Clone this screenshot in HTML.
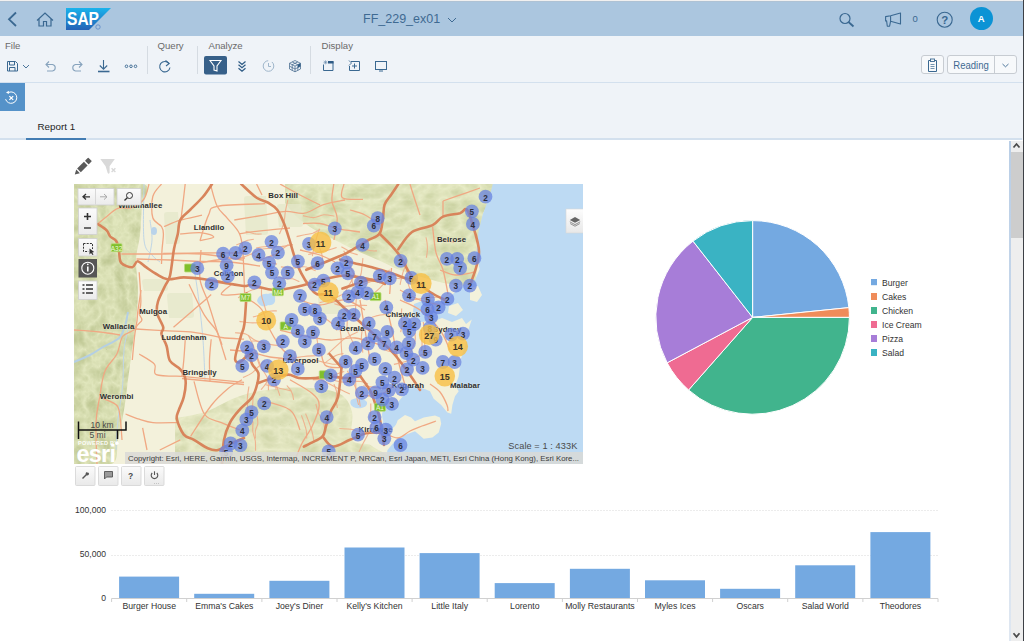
<!DOCTYPE html>
<html><head><meta charset="utf-8">
<style>
*{margin:0;padding:0;box-sizing:border-box}
html,body{width:1024px;height:641px;overflow:hidden;background:#fff;font-family:"Liberation Sans",sans-serif}
.a{position:absolute}
#top{left:0;top:0;width:1024px;height:1px;background:#f1f0f0}
#hdr{left:0;top:1px;width:1024px;height:35px;background:#abc6df}
#tb{left:0;top:36px;width:1024px;height:104px;background:#eff3f8}
#tbline{left:0;top:82px;width:1024px;height:1px;background:#d3e0ee}
#tabline{left:0;top:138px;width:1022px;height:1.5px;background:#d3e0ee}
#bluebox{left:0;top:83px;width:25px;height:28px;background:#5592c9}
.lbl{font-size:9.6px;color:#6a6a6a}
.sep{width:1px;background:#d5dbe2;top:46px;height:28px}
#rightedge{left:1022.6px;top:0;width:1.4px;height:641px;background:#3d4045}
#sb{left:1010px;top:141px;width:13px;height:500px;background:#eeeeee}
#sbl{left:1009px;top:141px;width:1.5px;height:500px;background:linear-gradient(#b9cee6,#dfe7f1)}
#thumb{left:1010.5px;top:152px;width:12.5px;height:86px;background:#cdcdcd}
svg{position:absolute;overflow:visible}
</style></head><body>
<div class="a" id="top"></div>
<div class="a" id="hdr"></div>
<div class="a" style="left:0;top:1px;width:1024px;height:1px;background:#afc2d4"></div>
<div class="a" id="tb"></div>
<div class="a" id="tbline"></div>
<div class="a" id="tabline"></div>
<div class="a" id="bluebox"></div>
<div class="a" id="sb"></div>
<div class="a" id="sbl"></div>
<div class="a" id="thumb"></div>
<div class="a" id="rightedge"></div>

<!-- header icons -->
<svg style="left:0;top:0" width="1024" height="36">
  <path d="M16 12.5 L9 19.3 L16 26" fill="none" stroke="#3a6891" stroke-width="1.8"/>
  <path d="M37 20.5 L45 13 L53 20.5 M39 19 V26 H43.5 V21.5 H46.5 V26 H51 V19" fill="none" stroke="#3a6891" stroke-width="1.2"/>
  <defs><linearGradient id="sapg" x1="0" y1="0" x2="0" y2="1"><stop offset="0" stop-color="#1ab3ec"/><stop offset="1" stop-color="#2361b6"/></linearGradient></defs>
  <path d="M66 8 H111 L89 30 H66 Z" fill="url(#sapg)"/>
  <text x="67" y="25.2" font-family="Liberation Sans" font-weight="bold" font-size="19" fill="#fff" textLength="32" lengthAdjust="spacingAndGlyphs">SAP</text>
  <circle cx="98" cy="27" r="2.2" fill="none" stroke="#5d86c6" stroke-width="0.8"/>
  <text x="363" y="23" font-family="Liberation Sans" font-size="12.5" fill="#3f6a92">FF_229_ex01</text>
  <path d="M448 18 L452 22 L456 18" fill="none" stroke="#3f6a92" stroke-width="1"/>
  <circle cx="845" cy="18.5" r="5" fill="none" stroke="#3a6891" stroke-width="1.2"/>
  <path d="M848.5 22 L853.5 26.5" stroke="#3a6891" stroke-width="1.8"/>
  <path d="M885.6 16.6 L890.6 15.8 L900.5 13 V24 L890.6 21.2 L889.6 26.2 H887.3 L886.6 20.9 H885.6 Z M890.6 15.8 V21.2" fill="none" stroke="#3a6891" stroke-width="1.1" stroke-linejoin="round"/>
  <text x="912.5" y="22" font-family="Liberation Sans" font-size="9.5" fill="#3a6891">0</text>
  <circle cx="944.7" cy="19.7" r="7.5" fill="none" stroke="#3a6891" stroke-width="1.1"/>
  <text x="944.7" y="24.2" text-anchor="middle" font-family="Liberation Sans" font-weight="bold" font-size="11.5" fill="#3a6891">?</text>
  <circle cx="981.5" cy="18.5" r="11.5" fill="#0b93d5"/>
  <text x="977.8" y="22.3" font-family="Liberation Sans" font-weight="bold" font-size="9.5" fill="#fff">A</text>
</svg>

<!-- toolbar -->
<div class="a lbl" style="left:5px;top:39.5px">File</div>
<div class="a lbl" style="left:157.5px;top:39.5px">Query</div>
<div class="a lbl" style="left:208.5px;top:39.5px">Analyze</div>
<div class="a lbl" style="left:321.5px;top:39.5px">Display</div>
<div class="a sep" style="left:147px"></div>
<div class="a sep" style="left:197px"></div>
<div class="a sep" style="left:310px"></div>

<svg style="left:0;top:0" width="1024" height="140">
  <!-- save -->
  <path d="M7.5 61.5 H15.5 L17.5 63.5 V71 H7.5 Z M9.5 61.5 V65 H14.5 V61.5 M9.5 71 V67.5 H15 V71" fill="none" stroke="#3a6891" stroke-width="1"/>
  <path d="M23 65 L26 68 L29 65" fill="none" stroke="#3a6891" stroke-width="0.9"/>
  <!-- undo -->
  <path d="M49 61.5 L46 64.5 L49 67.5 M46 64.5 H52.5 A3.3 3.3 0 0 1 52.5 71 H47" fill="none" stroke="#87a3bd" stroke-width="1.1"/>
  <!-- redo -->
  <path d="M79 61.5 L82 64.5 L79 67.5 M82 64.5 H75.5 A3.3 3.3 0 0 0 75.5 71 H81" fill="none" stroke="#87a3bd" stroke-width="1.1"/>
  <!-- download -->
  <path d="M103.5 60 V69 M99.8 65.5 L103.5 69.2 L107.2 65.5" fill="none" stroke="#3a6891" stroke-width="1.1"/>
  <path d="M98 71.5 H109.5" stroke="#3a6891" stroke-width="1.6"/>
  <!-- more -->
  <circle cx="126.5" cy="66.3" r="1.3" fill="none" stroke="#3a6891" stroke-width="0.9"/>
  <circle cx="131" cy="66.3" r="1.3" fill="none" stroke="#3a6891" stroke-width="0.9"/>
  <circle cx="135.5" cy="66.3" r="1.3" fill="none" stroke="#3a6891" stroke-width="0.9"/>
  <!-- refresh -->
  <path d="M169 63.5 A5.2 5.2 0 1 0 170 67.5" fill="none" stroke="#3a6891" stroke-width="1.1"/>
  <path d="M165.5 60.5 L169.2 63.5 L166 66" fill="none" stroke="#3a6891" stroke-width="1.1"/>
  <!-- filter active -->
  <rect x="204" y="56" width="23" height="18.5" rx="2" fill="#376089"/>
  <path d="M210 60.5 H221 L217 66 V71 L214 70 V66 Z" fill="none" stroke="#fff" stroke-width="1.1"/>
  <!-- double chevrons -->
  <path d="M238.5 61.5 L242 64.5 L245.5 61.5 M238.5 64.8 L242 67.8 L245.5 64.8 M238.5 68.2 L242 71.2 L245.5 68.2" fill="none" stroke="#2e5b85" stroke-width="1.2"/>
  <!-- history -->
  <circle cx="268.5" cy="66" r="5.3" fill="none" stroke="#9fb6cb" stroke-width="1" stroke-dasharray="24 4"/>
  <path d="M268.5 63 V66.5 H271" fill="none" stroke="#9fb6cb" stroke-width="1"/>
  <!-- cube -->
  <path d="M295 60.5 L300.5 63.3 V69 L295 71.8 L289.5 69 V63.3 Z M289.5 63.3 L295 66.1 L300.5 63.3 M295 66.1 V71.8 M292.2 61.9 L297.8 64.7 M297.8 61.9 L292.2 64.7 M289.5 66.2 L295 69 L300.5 66.2 M292.2 64.7 V70.4 M297.8 64.7 V70.4" fill="none" stroke="#45698d" stroke-width="0.75"/>
  <path d="M298 64.5 L300.5 63.3 V66.2 L298 67.5 Z" fill="#2e5b85"/>
  <!-- display icons -->
  <path d="M323.5 64.5 V70.5 H333 V61.5 H328" fill="none" stroke="#3a6891" stroke-width="1"/>
  <rect x="328" y="61" width="5.5" height="2.5" fill="#2e5b85"/>
  <path d="M325.5 60.3 V64.3 M323.5 62.3 H327.5 M324 60.8 L327 63.8 M327 60.8 L324 63.8" stroke="#6a8cad" stroke-width="0.6"/>
  <path d="M349 60.5 L351.5 63 L349 65.5" fill="none" stroke="#3a6891" stroke-width="0.9"/>
  <path d="M351 61.5 H359.5 V70.5 H349.5 V66 M354.5 63.5 V68.5 M352 66 H357" fill="none" stroke="#3a6891" stroke-width="1"/>
  <rect x="375.5" y="61.5" width="11" height="8" fill="none" stroke="#3a6891" stroke-width="1"/>
  <path d="M379 71 H383" stroke="#3a6891" stroke-width="1"/>
  <!-- right buttons -->
  <rect x="921.5" y="55.5" width="22" height="18" rx="2.5" fill="#f7f9fb" stroke="#c7ccd2" stroke-width="1"/>
  <path d="M930.5 60.5 H928.5 V71.5 H936.5 V60.5 H934.5" fill="none" stroke="#3a6891" stroke-width="1"/><rect x="930.5" y="59" width="4" height="2.5" fill="none" stroke="#3a6891" stroke-width="0.9"/><path d="M930.5 64.5 H934.5 M930.5 66.5 H934.5 M930.5 68.5 H934.5" stroke="#3a6891" stroke-width="0.7"/>
  <rect x="947.5" y="55.5" width="69" height="18" rx="2.5" fill="#f7f9fb" stroke="#c7ccd2" stroke-width="1"/>
  <path d="M994.5 56 V73" stroke="#c7ccd2" stroke-width="1"/>
  <text x="953.3" y="68.5" font-family="Liberation Sans" font-size="10.2" fill="#3f6a92" textLength="35.5" lengthAdjust="spacingAndGlyphs">Reading</text>
  <path d="M1002.5 64 L1005.5 66.8 L1008.5 64" fill="none" stroke="#3a6891" stroke-width="0.9"/>
  <!-- blue box icon -->
  <path d="M6 92.4 L8.9 90.7 V94.1 Z" fill="#fff"/>
  <path d="M8.8 92.4 A5.7 5.7 0 1 1 5.6 99.2" fill="none" stroke="#fff" stroke-width="1"/>
  <path d="M9.4 96.1 L13.2 99.9 M13.2 96.1 L9.4 99.9" stroke="#fff" stroke-width="1.3"/>
  <!-- tab -->
  <text x="37.5" y="130" font-family="Liberation Sans" font-size="9.8" fill="#1e1e1e">Report 1</text>
  <rect x="26" y="138" width="60" height="2" fill="#427cb3"/>
  <!-- scrollbar arrows -->
  <path d="M1013.5 147.5 L1016.5 144 L1019.5 147.5" fill="none" stroke="#4a4a4a" stroke-width="1.7"/>
  <path d="M1013.5 633.2 L1016.5 636.8 L1019.5 633.2" fill="none" stroke="#4a4a4a" stroke-width="1.7"/>
</svg>

<!-- MAP -->
<svg id="mapsvg" style="left:0;top:0" width="1024" height="641">
<!--MAPSTART-->
<defs><clipPath id="mclip"><rect x="74" y="184" width="509" height="280"/></clipPath><filter id="terr" x="74" y="184" width="509" height="280" filterUnits="userSpaceOnUse" color-interpolation-filters="sRGB"><feTurbulence type="turbulence" baseFrequency="0.07 0.06" numOctaves="3" seed="7"/><feColorMatrix type="matrix" values="-0.2 0 0 0 0.89  -0.18 0 0 0 0.91  -0.24 0 0 0 0.75  0 0 0 0 1"/></filter><filter id="terr2" x="74" y="184" width="509" height="280" filterUnits="userSpaceOnUse" color-interpolation-filters="sRGB"><feTurbulence type="turbulence" baseFrequency="0.05 0.07" numOctaves="3" seed="11"/><feColorMatrix type="matrix" values="-0.16 0 0 0 0.91  -0.14 0 0 0 0.925  -0.2 0 0 0 0.775  0 0 0 0 1"/></filter><clipPath id="lhclip"><path d="M74.0 184.0 C85.5 184.0 131.7 180.5 143.0 184.0 C154.3 187.5 142.5 196.5 142.0 205.0 C141.5 213.5 141.0 225.8 140.0 235.0 C139.0 244.2 136.3 250.8 136.0 260.0 C135.7 269.2 138.0 280.0 138.0 290.0 C138.0 300.0 137.0 310.0 136.0 320.0 C135.0 330.0 133.3 340.0 132.0 350.0 C130.7 360.0 129.3 370.0 128.0 380.0 C126.7 390.0 125.7 400.0 124.0 410.0 C122.3 420.0 120.0 431.0 118.0 440.0 C116.0 449.0 119.3 460.0 112.0 464.0 C104.7 468.0 80.3 464.0 74.0 464.0 Z"/></clipPath><clipPath id="thclip"><path d="M285.0 184.0 C319.5 184.0 459.0 179.0 492.0 184.0 C525.0 189.0 485.5 202.3 483.0 214.0 C480.5 225.7 478.5 242.7 477.0 254.0 C475.5 265.3 478.5 277.0 474.0 282.0 C469.5 287.0 458.2 284.7 450.0 284.0 C441.8 283.3 433.3 280.3 425.0 278.0 C416.7 275.7 407.8 273.0 400.0 270.0 C392.2 267.0 385.5 263.3 378.0 260.0 C370.5 256.7 362.2 253.3 355.0 250.0 C347.8 246.7 341.7 243.3 335.0 240.0 C328.3 236.7 321.2 233.7 315.0 230.0 C308.8 226.3 303.0 222.5 298.0 218.0 C293.0 213.5 287.2 205.5 285.0 203.0 Z"/></clipPath><clipPath id="bhclip"><path d="M175.0 418.0 C180.0 417.0 194.2 415.7 205.0 412.0 C215.8 408.3 228.3 399.8 240.0 396.0 C251.7 392.2 263.3 390.3 275.0 389.0 C286.7 387.7 299.2 387.2 310.0 388.0 C320.8 388.8 333.0 390.0 340.0 394.0 C347.0 398.0 350.0 404.3 352.0 412.0 C354.0 419.7 348.7 434.3 352.0 440.0 C355.3 445.7 368.2 442.0 372.0 446.0 C375.8 450.0 407.8 461.0 375.0 464.0 C342.2 467.0 208.3 464.0 175.0 464.0 Z"/></clipPath></defs>
<g clip-path="url(#mclip)">
<rect x="74" y="184" width="509" height="280" fill="#f3f1db"/>
<g clip-path="url(#lhclip)"><rect x="74" y="184" width="120" height="280" filter="url(#terr)"/></g>
<g clip-path="url(#thclip)" opacity="0.9"><rect x="280" y="184" width="220" height="110" filter="url(#terr2)"/></g>
<g clip-path="url(#bhclip)" opacity="0.8"><rect x="160" y="380" width="200" height="84" filter="url(#terr2)"/></g>
<path d="M164 215 Q164 212 167 212 H178 L180 241 Q180 244 177 244 H166 Z" fill="#e4e7c9" opacity="0.75"/>
<path d="M244 199 Q244 196 247 196 H266 L268 232 Q268 235 265 235 H246 Z" fill="#e4e7c9" opacity="0.75"/>
<path d="M277 207 Q277 204 280 204 H301 L303 224 Q303 227 300 227 H279 Z" fill="#e4e7c9" opacity="0.75"/>
<path d="M142 282 Q142 279 145 279 H166 L168 288 Q168 291 165 291 H144 Z" fill="#e4e7c9" opacity="0.75"/>
<path d="M167 296 Q167 293 170 293 H192 L194 315 Q194 318 191 318 H169 Z" fill="#e4e7c9" opacity="0.75"/>
<path d="M318 299 Q318 296 321 296 H340 L342 311 Q342 314 339 314 H320 Z" fill="#e4e7c9" opacity="0.75"/>
<path d="M492.8 184.0 L489.3 197.0 L482.7 214.6 L478.4 232.0 L476.2 254.0 L479.7 269.2 L474.0 282.4 L466.0 284.0 L458.0 289.0 L452.0 295.0 L446.0 299.0 L440.0 302.0 L432.0 300.0 L422.0 301.0 L414.0 304.0 L413.0 312.0 L420.0 322.0 L434.0 321.0 L442.0 318.0 L452.0 322.0 L462.0 318.0 L466.0 324.0 L471.8 319.5 L467.4 332.6 L465.2 345.7 L460.9 358.9 L458.7 376.3 L457.4 380.0 L455.0 385.0 L458.7 391.2 L455.0 396.2 L452.4 405.0 L451.2 413.7 L447.4 412.5 L441.2 405.0 L433.7 398.7 L430.0 391.2 L421.2 387.5 L410.0 385.0 L405.0 393.7 L398.7 401.2 L396.2 408.7 L390.0 412.5 L385.0 417.5 L382.5 423.7 L380.0 425.0 L396.2 421.2 L405.0 415.0 L411.2 417.5 L415.0 421.2 L423.7 417.5 L435.0 415.6 L440.0 417.5 L441.2 423.7 L438.7 432.4 L432.4 437.4 L423.7 438.7 L415.0 431.2 L405.0 435.0 L398.7 438.7 L393.7 442.4 L387.5 450.0 L385.0 464.0 L583.0 464.0 L583.0 184.0 Z" fill="#bddaf3"/>
<path d="M470 288 L478 286 L482 295 L477 302 L470 300 Z M449 306 L458 303 L463 310 L456 316 L448 313 Z M430 292 L440 289 L444 296 L436 299 Z" fill="#f3f1db"/>
<path d="M257 301 C258 296 263 293 268 294 C272 292 276 295 275 299 C276 303 272 306 268 305 C264 308 259 306 257 301 Z" fill="#bddaf3"/>
<path d="M351 400 C356 397 364 398 367 402 C368 407 362 409 356 408 C352 407 349 404 351 400 Z M384 406 C389 404 396 407 398 413 C399 420 396 427 391 429 C386 428 382 421 382 414 Z" fill="#bddaf3"/>
<path d="M74.0 362.0 C76.7 360.8 85.2 357.5 90.0 355.0 C94.8 352.5 98.2 349.8 103.0 347.0 C107.8 344.2 115.3 341.5 119.0 338.0 C122.7 334.5 123.5 330.3 125.0 326.0 C126.5 321.7 127.5 314.3 128.0 312.0" fill="none" stroke="#b4cfe3" stroke-width="2"/>
<path d="M150.0 220.0 C150.3 223.3 152.3 233.0 152.0 240.0 C151.7 247.0 148.7 258.3 148.0 262.0" fill="none" stroke="#c0d6e6" stroke-width="1"/>
<ellipse cx="154" cy="231" rx="3" ry="4" fill="#b9d3ea"/>
<path d="M128.7 326.5 C127.9 330.4 125.0 340.2 124.0 350.0 C123.0 359.8 123.7 373.3 122.7 385.0 C121.7 396.7 119.1 409.2 118.0 420.0 C116.9 430.8 116.3 445.0 116.0 450.0" fill="none" stroke="#c0d6e6" stroke-width="1"/>
<path d="M144.0 184.0 C144.0 193.3 142.7 228.2 144.0 240.0 C145.3 251.8 149.3 251.3 152.0 255.0 C154.7 258.7 158.7 260.8 160.0 262.0" fill="none" stroke="#c0d6e6" stroke-width="1"/>
<path d="M194.0 267.0 C194.8 272.8 197.5 289.3 199.0 301.5 C200.5 313.7 202.0 326.9 203.0 340.0 C204.0 353.1 204.7 373.3 205.0 380.0" fill="none" stroke="#c0d6e6" stroke-width="1"/>
<path d="M256.1 248.0 C258.2 247.7 264.3 246.5 268.4 246.3 C272.5 246.1 276.7 247.0 280.8 246.7 C284.9 246.4 291.0 244.9 293.0 244.6" fill="none" stroke="#f0ac88" stroke-width="1.1" opacity="0.9"/>
<path d="M239.5 321.4 C241.3 321.6 246.7 322.6 250.3 322.8 C253.9 323.0 257.5 322.7 261.1 322.6 C264.8 322.6 270.2 322.6 272.0 322.6" fill="none" stroke="#f0ac88" stroke-width="1.1" opacity="0.9"/>
<path d="M257.1 416.0 C257.2 417.3 258.1 421.1 257.8 423.6 C257.5 426.1 255.8 428.3 255.4 430.8 C255.0 433.3 255.4 437.2 255.4 438.4" fill="none" stroke="#f0ac88" stroke-width="1.1" opacity="0.9"/>
<path d="M362.5 284.9 C364.1 284.2 369.0 282.2 372.2 280.9 C375.4 279.5 378.9 278.6 381.9 276.8 C384.8 274.9 388.4 271.0 389.7 269.9" fill="none" stroke="#f0ac88" stroke-width="1.1" opacity="0.9"/>
<path d="M362.3 328.9 C362.2 330.2 361.5 334.1 361.4 336.8 C361.3 339.4 361.7 342.1 361.9 344.7 C362.2 347.4 362.7 351.3 362.8 352.6" fill="none" stroke="#f0ac88" stroke-width="1.1" opacity="0.9"/>
<path d="M267.8 360.4 C268.5 362.0 270.3 366.8 271.6 369.9 C272.8 373.1 274.6 376.2 275.3 379.5 C276.1 382.8 275.9 388.0 276.0 389.7" fill="none" stroke="#f0ac88" stroke-width="1.1" opacity="0.9"/>
<path d="M334.0 384.2 C334.4 385.5 336.3 389.3 336.6 391.9 C337.0 394.5 335.9 397.3 336.0 400.0 C336.1 402.7 337.2 406.7 337.4 408.0" fill="none" stroke="#f0ac88" stroke-width="1.1" opacity="0.9"/>
<path d="M408.7 299.8 C410.3 299.7 415.2 299.5 418.5 299.1 C421.7 298.7 424.9 297.7 428.1 297.4 C431.4 297.1 436.3 297.2 438.0 297.2" fill="none" stroke="#f0ac88" stroke-width="1.1" opacity="0.9"/>
<path d="M303.3 308.0 C304.9 309.0 309.5 312.3 312.9 313.9 C316.2 315.5 320.2 315.9 323.5 317.6 C326.8 319.3 331.2 323.0 332.7 324.1" fill="none" stroke="#f0ac88" stroke-width="1.1" opacity="0.9"/>
<path d="M423.3 322.0 C423.5 323.9 424.5 329.4 424.7 333.2 C424.9 336.9 424.4 340.7 424.7 344.5 C424.9 348.2 425.9 353.8 426.1 355.6" fill="none" stroke="#f0ac88" stroke-width="1.1" opacity="0.9"/>
<path d="M308.2 254.5 C309.8 254.1 314.6 253.1 317.7 252.4 C320.9 251.7 324.1 251.2 327.3 250.4 C330.4 249.5 335.1 248.0 336.6 247.5" fill="none" stroke="#f0ac88" stroke-width="1.1" opacity="0.9"/>
<path d="M361.2 249.5 C362.1 249.5 364.7 249.4 366.5 249.6 C368.2 249.8 369.9 250.6 371.6 250.8 C373.3 251.1 376.0 250.9 376.9 250.9" fill="none" stroke="#f0ac88" stroke-width="1.1" opacity="0.9"/>
<path d="M343.5 312.9 C343.2 313.9 342.5 317.0 341.8 319.0 C341.1 321.0 340.0 322.8 339.1 324.7 C338.2 326.6 336.9 329.5 336.4 330.4" fill="none" stroke="#f0ac88" stroke-width="1.1" opacity="0.9"/>
<path d="M312.8 379.6 C314.6 379.5 320.2 380.0 323.7 379.3 C327.3 378.5 330.5 376.4 333.9 375.1 C337.3 373.8 342.5 372.0 344.2 371.4" fill="none" stroke="#f0ac88" stroke-width="1.1" opacity="0.9"/>
<path d="M318.3 245.6 C318.7 246.5 320.2 249.2 320.9 251.1 C321.5 253.0 322.1 255.0 322.3 257.0 C322.5 259.0 322.1 262.1 322.0 263.1" fill="none" stroke="#f0ac88" stroke-width="1.1" opacity="0.9"/>
<path d="M406.6 264.2 C406.1 265.3 404.3 268.4 403.5 270.7 C402.6 272.9 402.3 275.4 401.7 277.7 C401.1 280.0 400.3 283.6 400.1 284.8" fill="none" stroke="#f0ac88" stroke-width="1.1" opacity="0.9"/>
<path d="M347.3 320.7 C347.3 322.3 346.7 326.9 347.3 329.8 C348.0 332.7 349.8 335.3 351.0 338.1 C352.2 340.9 354.0 345.0 354.6 346.4" fill="none" stroke="#f0ac88" stroke-width="1.1" opacity="0.9"/>
<path d="M429.2 295.0 C429.4 295.8 430.1 298.3 430.2 299.9 C430.2 301.6 429.7 303.2 429.6 304.9 C429.4 306.5 429.3 309.1 429.2 309.9" fill="none" stroke="#f0ac88" stroke-width="1.1" opacity="0.9"/>
<path d="M268.3 257.8 C269.5 257.2 273.3 255.6 275.6 254.2 C277.9 252.8 279.9 251.0 282.0 249.3 C284.2 247.7 287.4 245.3 288.5 244.5" fill="none" stroke="#f0ac88" stroke-width="1.1" opacity="0.9"/>
<path d="M237.9 259.0 C239.8 258.3 245.7 256.4 249.4 254.8 C253.2 253.2 256.6 250.5 260.5 249.4 C264.4 248.3 270.7 248.3 272.7 248.1" fill="none" stroke="#f0ac88" stroke-width="1.1" opacity="0.9"/>
<path d="M382.5 349.0 C384.1 349.5 388.5 351.6 391.6 351.8 C394.7 352.0 397.9 350.3 401.0 350.5 C404.1 350.7 408.6 352.6 410.1 353.0" fill="none" stroke="#f0ac88" stroke-width="1.1" opacity="0.9"/>
<path d="M253.0 421.3 C253.0 423.0 252.5 428.0 252.8 431.2 C253.2 434.5 254.8 437.6 255.3 440.8 C255.7 444.1 255.5 449.1 255.5 450.7" fill="none" stroke="#f0ac88" stroke-width="1.1" opacity="0.9"/>
<path d="M252.9 317.0 C254.2 316.6 258.3 315.6 260.9 314.7 C263.5 313.7 265.8 311.8 268.4 311.2 C271.1 310.6 275.4 311.0 276.8 310.9" fill="none" stroke="#f0ac88" stroke-width="1.1" opacity="0.9"/>
<path d="M362.9 258.1 C362.8 259.5 362.4 263.7 362.0 266.4 C361.6 269.2 361.7 272.2 360.8 274.7 C359.8 277.3 357.0 280.6 356.2 281.8" fill="none" stroke="#f0ac88" stroke-width="1.1" opacity="0.9"/>
<path d="M294.9 351.4 C294.9 352.5 295.2 355.9 294.9 358.1 C294.5 360.3 293.0 362.3 292.7 364.4 C292.3 366.6 292.6 370.0 292.6 371.2" fill="none" stroke="#f0ac88" stroke-width="1.1" opacity="0.9"/>
<path d="M296.6 236.6 C298.0 236.3 302.0 235.3 304.6 234.8 C307.3 234.2 310.1 234.0 312.7 233.2 C315.3 232.3 318.9 230.2 320.1 229.6" fill="none" stroke="#f0ac88" stroke-width="1.1" opacity="0.9"/>
<path d="M287.8 200.1 C287.4 202.0 286.0 207.7 285.4 211.5 C284.7 215.4 284.8 219.4 283.8 223.2 C282.9 226.9 280.1 232.3 279.4 234.1" fill="none" stroke="#f0ac88" stroke-width="1.1" opacity="0.9"/>
<path d="M257.3 356.8 C258.0 358.7 259.9 364.4 261.6 368.0 C263.3 371.6 266.4 374.7 267.6 378.4 C268.7 382.1 268.3 388.3 268.5 390.3" fill="none" stroke="#f0ac88" stroke-width="1.1" opacity="0.9"/>
<path d="M252.1 341.0 C253.7 341.1 258.7 341.1 261.9 341.7 C265.1 342.3 268.1 344.0 271.2 344.6 C274.4 345.3 279.4 345.6 281.0 345.8" fill="none" stroke="#f0ac88" stroke-width="1.1" opacity="0.9"/>
<path d="M440.4 239.4 C441.1 239.7 443.3 240.5 444.8 240.8 C446.3 241.2 447.9 241.1 449.5 241.4 C451.0 241.6 453.3 242.1 454.1 242.3" fill="none" stroke="#f0ac88" stroke-width="1.1" opacity="0.9"/>
<path d="M393.9 364.4 C396.0 363.8 402.3 362.6 406.4 361.2 C410.4 359.9 414.3 357.8 418.3 356.2 C422.2 354.6 428.2 352.2 430.2 351.4" fill="none" stroke="#f0ac88" stroke-width="1.1" opacity="0.9"/>
<path d="M324.6 363.4 C325.5 362.6 328.3 360.2 330.3 358.9 C332.2 357.5 334.3 356.2 336.5 355.3 C338.7 354.4 342.4 353.8 343.5 353.5" fill="none" stroke="#f0ac88" stroke-width="1.1" opacity="0.9"/>
<path d="M354.0 273.8 C353.6 274.8 352.9 278.0 352.0 280.0 C351.1 282.0 349.7 283.7 348.6 285.6 C347.6 287.5 346.1 290.4 345.6 291.4" fill="none" stroke="#f0ac88" stroke-width="1.1" opacity="0.9"/>
<path d="M327.1 354.6 C328.6 353.1 333.3 348.7 336.5 345.8 C339.8 342.9 342.8 339.7 346.4 337.4 C350.0 335.1 356.1 332.8 358.0 331.8" fill="none" stroke="#f0ac88" stroke-width="1.1" opacity="0.9"/>
<path d="M401.7 308.4 C401.7 309.7 401.3 313.7 401.4 316.4 C401.5 319.1 402.3 321.7 402.1 324.4 C402.0 327.0 400.9 330.9 400.6 332.2" fill="none" stroke="#f0ac88" stroke-width="1.1" opacity="0.9"/>
<path d="M339.4 428.5 C341.4 428.7 347.2 428.8 351.0 429.3 C354.8 429.9 358.5 431.6 362.3 432.1 C366.1 432.6 372.0 432.4 373.9 432.4" fill="none" stroke="#f0ac88" stroke-width="1.1" opacity="0.9"/>
<path d="M355.7 377.0 C355.7 378.6 355.6 383.3 355.8 386.4 C355.9 389.6 356.1 392.7 356.5 395.8 C357.0 398.9 358.3 403.5 358.6 405.0" fill="none" stroke="#f0ac88" stroke-width="1.1" opacity="0.9"/>
<path d="M251.5 254.3 C252.8 255.1 256.6 257.6 259.4 258.9 C262.2 260.2 265.1 261.1 268.1 262.0 C271.0 262.9 275.5 263.8 277.0 264.2" fill="none" stroke="#f0ac88" stroke-width="1.1" opacity="0.9"/>
<path d="M259.3 260.6 C260.1 260.3 262.5 259.0 264.1 258.3 C265.8 257.6 267.5 257.2 269.2 256.5 C270.8 255.9 273.2 254.6 274.0 254.2" fill="none" stroke="#f0ac88" stroke-width="1.1" opacity="0.9"/>
<path d="M238.1 297.9 C239.3 297.1 242.7 294.7 245.1 293.4 C247.5 292.0 249.9 290.6 252.5 289.7 C255.1 288.8 259.2 288.3 260.6 288.0" fill="none" stroke="#f0ac88" stroke-width="1.1" opacity="0.9"/>
<path d="M347.3 370.8 C348.3 372.7 351.2 378.4 353.1 382.3 C354.9 386.2 357.0 390.0 358.2 394.1 C359.4 398.1 359.9 404.6 360.2 406.7" fill="none" stroke="#f0ac88" stroke-width="1.1" opacity="0.9"/>
<path d="M421.5 329.9 C421.6 331.1 421.5 334.6 421.6 337.0 C421.7 339.3 422.1 341.6 422.1 344.0 C422.0 346.3 421.6 349.8 421.5 351.0" fill="none" stroke="#f0ac88" stroke-width="1.1" opacity="0.9"/>
<path d="M301.4 415.4 C301.9 416.6 303.3 420.4 304.1 422.9 C304.9 425.4 305.8 427.9 306.3 430.5 C306.7 433.1 306.6 437.1 306.7 438.5" fill="none" stroke="#f0ac88" stroke-width="1.1" opacity="0.9"/>
<path d="M286.8 385.5 C287.4 386.2 289.4 388.1 290.3 389.6 C291.3 391.1 292.0 392.8 292.6 394.5 C293.1 396.2 293.4 398.9 293.6 399.8" fill="none" stroke="#f0ac88" stroke-width="1.1" opacity="0.9"/>
<path d="M278.2 359.0 C280.4 358.9 286.8 358.8 291.1 358.4 C295.4 358.0 299.6 357.0 303.9 356.5 C308.2 356.1 314.6 355.7 316.7 355.5" fill="none" stroke="#f0ac88" stroke-width="1.1" opacity="0.9"/>
<path d="M341.4 246.7 C342.3 247.2 345.0 248.6 346.7 249.7 C348.4 250.8 349.9 252.3 351.8 253.1 C353.6 253.9 356.7 254.4 357.7 254.7" fill="none" stroke="#f0ac88" stroke-width="1.1" opacity="0.9"/>
<path d="M267.0 366.1 C268.1 367.6 271.7 371.8 273.3 375.0 C274.9 378.2 275.3 381.9 276.4 385.4 C277.5 388.8 279.3 394.0 279.9 395.7" fill="none" stroke="#f0ac88" stroke-width="1.1" opacity="0.9"/>
<path d="M319.6 302.7 C321.5 302.2 327.3 300.9 331.0 299.5 C334.7 298.2 338.2 296.1 341.9 294.8 C345.6 293.5 351.4 292.3 353.3 291.8" fill="none" stroke="#f0ac88" stroke-width="1.1" opacity="0.9"/>
<path d="M426.0 237.3 C426.2 238.4 427.0 241.8 427.2 244.1 C427.5 246.4 427.5 248.7 427.3 251.0 C427.2 253.3 426.5 256.7 426.4 257.8" fill="none" stroke="#f0ac88" stroke-width="1.1" opacity="0.9"/>
<path d="M339.0 324.3 C339.3 326.1 340.5 331.4 340.9 335.1 C341.3 338.7 341.1 342.3 341.3 346.0 C341.5 349.6 342.0 355.0 342.1 356.8" fill="none" stroke="#f0ac88" stroke-width="1.1" opacity="0.9"/>
<path d="M365.5 317.6 C366.6 317.5 370.0 317.5 372.1 317.2 C374.3 316.8 376.3 315.8 378.5 315.4 C380.6 314.9 383.9 314.7 385.0 314.5" fill="none" stroke="#f0ac88" stroke-width="1.1" opacity="0.9"/>
<path d="M314.6 328.0 C315.0 329.6 316.1 334.2 316.7 337.3 C317.3 340.3 317.6 343.5 318.2 346.6 C318.8 349.6 320.1 354.2 320.5 355.7" fill="none" stroke="#f0ac88" stroke-width="1.1" opacity="0.9"/>
<path d="M243.0 377.5 C244.4 376.8 248.8 375.2 251.4 373.4 C253.9 371.7 255.8 369.1 258.1 367.0 C260.4 364.9 263.8 361.7 265.0 360.7" fill="none" stroke="#f0ac88" stroke-width="1.1" opacity="0.9"/>
<path d="M317.8 378.4 C319.6 379.2 325.0 381.7 328.6 383.5 C332.1 385.3 335.6 387.2 339.1 389.0 C342.7 390.7 348.1 393.2 349.8 394.1" fill="none" stroke="#f0ac88" stroke-width="1.1" opacity="0.9"/>
<path d="M363.2 385.7 C364.8 386.0 369.5 386.6 372.7 387.1 C375.9 387.5 379.1 388.1 382.3 388.3 C385.5 388.5 390.3 388.2 391.9 388.2" fill="none" stroke="#f0ac88" stroke-width="1.1" opacity="0.9"/>
<path d="M315.9 403.8 C316.3 405.3 317.1 410.2 318.4 413.1 C319.6 416.1 322.2 418.5 323.3 421.4 C324.4 424.4 324.8 429.3 325.1 430.9" fill="none" stroke="#f0ac88" stroke-width="1.1" opacity="0.9"/>
<path d="M248.2 335.1 C249.0 336.8 251.8 341.9 253.2 345.5 C254.6 349.0 255.4 352.9 256.5 356.5 C257.7 360.2 259.6 365.6 260.3 367.4" fill="none" stroke="#f0ac88" stroke-width="1.1" opacity="0.9"/>
<path d="M305.6 413.6 C306.2 415.2 308.2 419.8 309.3 423.0 C310.4 426.2 311.5 429.3 312.3 432.6 C313.1 435.8 313.9 440.8 314.2 442.4" fill="none" stroke="#f0ac88" stroke-width="1.1" opacity="0.9"/>
<path d="M236.3 244.9 C237.3 244.5 240.2 243.4 242.1 242.7 C244.0 241.9 245.8 240.8 247.7 240.2 C249.7 239.7 252.8 239.4 253.8 239.2" fill="none" stroke="#f0ac88" stroke-width="1.1" opacity="0.9"/>
<path d="M350.2 265.7 C350.1 266.9 349.2 270.5 349.5 272.8 C349.7 275.1 351.0 277.3 351.7 279.6 C352.3 281.9 353.0 285.4 353.3 286.5" fill="none" stroke="#f0ac88" stroke-width="1.1" opacity="0.9"/>
<path d="M253.0 395.7 C253.0 397.3 253.0 402.0 252.6 405.1 C252.3 408.2 251.4 411.2 250.9 414.3 C250.4 417.4 249.8 422.1 249.6 423.6" fill="none" stroke="#f0ac88" stroke-width="1.1" opacity="0.9"/>
<path d="M265.7 384.7 C267.2 385.0 271.4 385.9 274.3 386.6 C277.1 387.4 279.8 388.3 282.7 389.0 C285.5 389.7 289.8 390.5 291.2 390.8" fill="none" stroke="#f0ac88" stroke-width="1.1" opacity="0.9"/>
<path d="M334.3 303.8 C336.1 304.2 341.4 306.0 345.1 306.2 C348.7 306.4 352.4 305.4 356.1 305.3 C359.7 305.1 365.3 305.5 367.1 305.5" fill="none" stroke="#f0ac88" stroke-width="1.1" opacity="0.9"/>
<path d="M313.8 359.4 C315.4 359.9 320.0 361.3 323.1 362.1 C326.3 362.9 329.5 363.8 332.7 364.2 C335.9 364.5 340.8 364.2 342.4 364.2" fill="none" stroke="#f0ac88" stroke-width="1.1" opacity="0.9"/>
<path d="M277.6 276.7 C278.9 277.0 282.5 278.2 284.9 278.5 C287.4 278.9 290.0 278.3 292.5 278.8 C294.9 279.3 298.3 281.2 299.4 281.6" fill="none" stroke="#f0ac88" stroke-width="1.1" opacity="0.9"/>
<path d="M415.0 333.0 C415.0 334.2 415.5 337.7 415.2 339.9 C414.8 342.1 413.8 344.2 413.0 346.4 C412.3 348.5 411.0 351.7 410.6 352.8" fill="none" stroke="#f0ac88" stroke-width="1.1" opacity="0.9"/>
<path d="M235.0 332.8 C236.8 333.0 242.4 332.9 245.7 334.1 C249.0 335.3 251.5 338.3 254.7 339.9 C257.9 341.6 263.0 343.2 264.7 343.9" fill="none" stroke="#f0ac88" stroke-width="1.1" opacity="0.9"/>
<path d="M245.6 231.2 C246.5 231.4 249.1 232.2 250.9 232.7 C252.6 233.2 254.4 233.8 256.2 234.0 C258.0 234.2 260.7 234.0 261.6 234.0" fill="none" stroke="#f0ac88" stroke-width="1.1" opacity="0.9"/>
<path d="M322.0 376.3 C323.4 376.8 327.7 378.1 330.5 378.9 C333.3 379.8 336.1 380.9 339.0 381.5 C341.8 382.1 346.3 382.4 347.7 382.6" fill="none" stroke="#f0ac88" stroke-width="1.1" opacity="0.9"/>
<path d="M319.4 228.6 C319.0 230.1 317.5 234.6 316.6 237.6 C315.7 240.7 314.9 243.7 314.2 246.8 C313.4 249.8 312.7 254.5 312.4 256.1" fill="none" stroke="#f0ac88" stroke-width="1.1" opacity="0.9"/>
<path d="M343.7 250.7 C344.5 252.4 346.9 257.4 348.3 260.8 C349.8 264.2 350.7 267.9 352.4 271.2 C354.2 274.4 357.7 278.8 358.7 280.3" fill="none" stroke="#f0ac88" stroke-width="1.1" opacity="0.9"/>
<path d="M370.8 403.4 C370.8 404.2 370.8 406.7 370.8 408.4 C370.8 410.0 370.8 411.7 370.6 413.4 C370.4 415.0 369.8 417.4 369.6 418.3" fill="none" stroke="#f0ac88" stroke-width="1.1" opacity="0.9"/>
<path d="M432.9 304.5 C432.6 305.4 431.6 308.2 430.9 310.1 C430.2 311.9 429.0 313.6 428.7 315.5 C428.3 317.4 429.0 320.4 429.1 321.4" fill="none" stroke="#f0ac88" stroke-width="1.1" opacity="0.9"/>
<path d="M405.5 258.9 C405.8 260.9 406.4 266.9 406.8 270.9 C407.2 274.9 407.1 279.0 408.0 282.9 C408.8 286.8 411.4 292.3 412.1 294.2" fill="none" stroke="#f0ac88" stroke-width="1.1" opacity="0.9"/>
<path d="M268.4 376.9 C268.2 377.7 267.7 380.2 267.0 381.7 C266.4 383.1 265.3 384.5 264.3 385.8 C263.3 387.2 261.6 388.9 261.0 389.6" fill="none" stroke="#f0ac88" stroke-width="1.1" opacity="0.9"/>
<path d="M303.0 215.6 C304.8 215.9 310.0 217.7 313.5 217.6 C317.0 217.5 320.3 215.1 323.8 214.8 C327.3 214.6 332.7 216.0 334.4 216.2" fill="none" stroke="#f0ac88" stroke-width="1.1" opacity="0.9"/>
<path d="M261.5 287.5 C261.6 288.8 261.3 293.0 261.6 295.7 C262.0 298.4 263.1 301.0 263.9 303.6 C264.6 306.3 265.8 310.2 266.1 311.5" fill="none" stroke="#f0ac88" stroke-width="1.1" opacity="0.9"/>
<path d="M354.8 289.5 C355.0 291.1 356.1 295.9 356.2 299.1 C356.3 302.3 355.6 305.5 355.5 308.8 C355.4 312.0 355.7 316.9 355.7 318.5" fill="none" stroke="#f0ac88" stroke-width="1.1" opacity="0.9"/>
<path d="M371.7 423.7 C371.1 425.4 369.6 430.4 368.2 433.7 C366.8 436.9 364.9 439.8 363.3 443.0 C361.7 446.1 359.6 450.9 358.8 452.5" fill="none" stroke="#f0ac88" stroke-width="1.1" opacity="0.9"/>
<path d="M348.3 356.1 C348.9 357.5 350.9 361.4 351.5 364.2 C352.0 366.9 351.4 369.9 351.5 372.8 C351.7 375.7 352.2 379.9 352.3 381.4" fill="none" stroke="#f0ac88" stroke-width="1.1" opacity="0.9"/>
<path d="M280.9 266.9 C282.9 267.1 288.8 268.1 292.7 268.0 C296.6 268.0 300.7 266.3 304.5 266.8 C308.3 267.2 313.8 270.1 315.7 270.7" fill="none" stroke="#f0ac88" stroke-width="1.1" opacity="0.9"/>
<path d="M248.9 386.5 C248.7 388.5 247.5 394.7 247.3 398.8 C247.1 403.0 247.8 407.2 247.9 411.3 C247.9 415.5 247.7 421.7 247.6 423.8" fill="none" stroke="#f0ac88" stroke-width="1.1" opacity="0.9"/>
<path d="M346.0 380.4 C347.2 380.6 350.9 381.2 353.4 381.4 C355.9 381.5 358.5 381.1 360.9 381.5 C363.3 381.9 366.8 383.5 368.0 383.8" fill="none" stroke="#f0ac88" stroke-width="1.1" opacity="0.9"/>
<path d="M395.2 278.1 C396.1 278.2 398.8 278.7 400.5 278.7 C402.3 278.7 404.0 277.9 405.8 277.9 C407.5 277.8 410.2 278.2 411.1 278.3" fill="none" stroke="#f0ac88" stroke-width="1.1" opacity="0.9"/>
<path d="M373.9 293.3 C375.0 292.4 378.0 289.8 380.0 287.9 C381.9 286.1 383.6 283.9 385.6 282.1 C387.6 280.3 390.8 277.9 391.9 277.0" fill="none" stroke="#f0ac88" stroke-width="1.1" opacity="0.9"/>
<path d="M97.8 224.0 C99.0 223.0 101.9 220.3 105.2 217.8 C108.6 215.2 113.4 210.1 117.8 208.4 C122.1 206.7 127.1 209.3 131.5 207.8 C135.9 206.2 141.1 203.0 144.0 199.0 C146.9 195.0 148.2 186.5 149.0 184.0" fill="none" stroke="#f0a883" stroke-width="1.3"/>
<path d="M161.5 184.0 C160.0 186.1 154.2 190.9 152.8 196.5 C151.3 202.1 151.3 212.8 152.8 217.8 C154.2 222.8 159.7 223.8 161.5 226.5 C163.3 229.2 163.3 230.1 163.4 234.0 C163.5 237.9 162.3 245.0 162.0 250.0 C161.7 255.0 161.6 261.7 161.5 264.0" fill="none" stroke="#f0a883" stroke-width="1.3"/>
<path d="M185.2 184.0 C184.6 189.2 182.3 209.2 181.5 215.2 C180.7 221.3 180.5 219.4 180.2 220.2" fill="none" stroke="#f0a883" stroke-width="1.3"/>
<path d="M164.0 226.5 C166.7 225.5 173.9 222.1 180.2 220.2 C186.6 218.4 198.4 216.1 202.0 215.2" fill="none" stroke="#f0a883" stroke-width="1.3"/>
<path d="M180.2 234.0 C183.9 233.8 196.4 232.2 202.0 232.8 C207.6 233.3 214.0 235.9 213.7 237.2 C213.4 238.5 202.3 240.0 200.0 240.6" fill="none" stroke="#f0a883" stroke-width="1.3"/>
<path d="M121.5 254.0 C127.9 254.0 146.6 254.0 160.0 254.0 C173.4 254.0 188.0 252.9 202.0 254.0 C216.0 255.1 237.0 259.2 244.0 260.3" fill="none" stroke="#f0a883" stroke-width="1.3"/>
<path d="M136.5 259.0 C142.1 259.2 159.1 259.6 170.0 260.0 C180.9 260.4 192.0 261.2 202.0 261.5 C212.0 261.8 220.3 261.2 230.0 262.0 C239.7 262.8 255.0 265.3 260.0 266.0" fill="none" stroke="#f0a883" stroke-width="1.3"/>
<path d="M163.2 253.4 C169.3 253.3 186.5 253.1 200.0 253.0 C213.5 252.9 236.7 253.0 244.0 253.0" fill="none" stroke="#f0a883" stroke-width="1.3"/>
<path d="M139.2 272.3 C139.5 277.2 140.9 294.6 140.9 301.5 C140.9 308.4 139.0 310.4 139.2 313.5 C139.3 316.6 142.4 317.7 141.8 320.3 C141.2 322.9 137.3 322.4 135.7 329.0 C134.1 335.6 132.9 354.8 132.3 360.0" fill="none" stroke="#f0a883" stroke-width="1.3"/>
<path d="M135.7 329.0 C140.3 329.3 153.5 330.1 163.2 330.6 C172.9 331.2 184.3 331.2 194.0 332.3 C203.7 333.4 213.2 336.4 221.5 337.5 C229.8 338.6 240.2 338.9 244.0 339.2" fill="none" stroke="#f0a883" stroke-width="1.3"/>
<path d="M189.0 284.3 C191.6 289.4 199.8 307.5 204.4 315.2 C209.0 322.9 213.5 325.6 216.4 330.6 C219.3 335.6 221.1 342.6 222.0 345.0" fill="none" stroke="#f0a883" stroke-width="1.3"/>
<path d="M201.0 250.0 C200.8 254.9 198.9 270.6 200.0 279.2 C201.1 287.8 204.8 292.4 207.8 301.5 C210.8 310.6 215.0 324.2 218.0 334.0 C221.0 343.8 224.7 355.7 226.0 360.0" fill="none" stroke="#f0a883" stroke-width="1.3"/>
<path d="M231.8 284.3 C230.1 286.0 219.5 293.0 221.5 294.6 C223.5 296.2 240.2 293.9 244.0 293.7" fill="none" stroke="#f0a883" stroke-width="1.3"/>
<path d="M173.5 327.2 C177.5 323.8 191.2 312.0 197.5 306.6 C203.8 301.2 208.9 296.6 211.2 294.6" fill="none" stroke="#f0a883" stroke-width="1.3"/>
<path d="M185.5 335.8 C185.2 339.8 184.4 353.3 183.8 360.0 C183.2 366.7 182.3 373.3 182.0 376.0" fill="none" stroke="#f0a883" stroke-width="1.3"/>
<path d="M211.2 339.2 C210.9 342.7 209.7 352.9 209.5 360.0 C209.3 367.1 209.9 378.3 210.0 382.0" fill="none" stroke="#f0a883" stroke-width="1.3"/>
<path d="M210.3 184.0 C211.5 187.7 214.3 200.6 217.2 206.3 C220.0 212.0 223.7 213.7 227.4 218.3 C231.1 222.9 236.9 228.0 239.5 233.7 C242.1 239.4 242.1 242.5 242.9 252.6 C243.8 262.6 244.3 287.1 244.6 294.0" fill="none" stroke="#f0a883" stroke-width="1.3"/>
<path d="M200.0 240.6 C201.4 236.3 205.7 220.6 208.6 214.9 C211.5 209.2 207.8 208.2 217.2 206.3 C226.6 204.4 257.2 204.1 265.2 203.7" fill="none" stroke="#f0a883" stroke-width="1.3"/>
<path d="M234.3 220.0 C239.5 219.2 256.6 216.3 265.2 214.9 C273.8 213.5 279.2 211.7 285.8 211.4 C292.4 211.1 298.3 214.3 304.6 213.2 C310.9 212.1 316.8 206.8 323.5 204.6 C330.2 202.4 341.4 200.8 345.0 200.0" fill="none" stroke="#f0a883" stroke-width="1.3"/>
<path d="M239.5 233.7 C243.8 233.1 256.8 231.2 265.2 230.3 C273.6 229.4 285.9 228.4 290.0 228.0" fill="none" stroke="#f0a883" stroke-width="1.3"/>
<path d="M303.0 223.5 C305.8 223.5 314.3 222.7 320.0 223.5 C325.7 224.3 330.5 227.2 337.2 228.6 C343.9 230.0 356.2 231.4 360.0 232.0" fill="none" stroke="#f0a883" stroke-width="1.3"/>
<path d="M333.8 184.0 C333.5 186.9 331.4 195.5 332.0 201.2 C332.6 206.9 336.9 211.8 337.2 218.3 C337.5 224.8 334.5 236.4 334.0 240.0" fill="none" stroke="#f0a883" stroke-width="1.3"/>
<path d="M344.0 184.0 C343.7 186.3 339.2 195.1 342.4 197.7 C345.6 200.3 359.6 199.1 363.0 199.4" fill="none" stroke="#f0a883" stroke-width="1.3"/>
<path d="M200.0 263.0 C203.4 262.4 213.1 260.3 220.6 259.5 C228.1 258.7 240.9 258.2 245.0 258.0" fill="none" stroke="#f0a883" stroke-width="1.3"/>
<path d="M256.6 184.0 L262.0 195.0" fill="none" stroke="#f0a883" stroke-width="1.3"/>
<path d="M280.0 184.0 C283.3 185.8 293.3 191.5 300.0 195.0 C306.7 198.5 316.7 203.3 320.0 205.0" fill="none" stroke="#f0a883" stroke-width="1.3"/>
<path d="M141.0 290.0 C140.5 293.3 139.0 303.6 138.0 310.0 C137.0 316.4 137.6 324.1 135.0 328.5 C132.4 332.9 125.6 332.2 122.6 336.5 C119.6 340.8 119.9 348.2 116.9 354.0 C114.0 359.8 107.8 364.1 104.9 371.2 C102.0 378.3 101.2 388.3 99.7 396.9 C98.2 405.5 96.5 411.4 96.0 422.6 C95.5 433.8 96.8 457.1 97.0 464.0" fill="none" stroke="#f0a883" stroke-width="1.3"/>
<path d="M182.0 376.3 L244.0 382.3" fill="none" stroke="#f0a883" stroke-width="1.3"/>
<path d="M182.0 378.5 L244.0 384.5" fill="none" stroke="#f0a883" stroke-width="1.3"/>
<path d="M190.6 436.3 C194.0 431.2 204.9 413.5 211.2 405.5 C217.5 397.5 223.3 392.6 228.4 388.3 C233.5 384.0 239.7 381.1 242.0 379.7" fill="none" stroke="#f0a883" stroke-width="1.3"/>
<path d="M194.0 381.4 C195.7 386.8 199.8 407.1 204.4 414.0 C209.0 420.9 215.6 419.9 221.5 422.6 C227.4 425.3 236.9 428.8 240.0 430.0" fill="none" stroke="#f0a883" stroke-width="1.3"/>
<path d="M139.2 354.0 C141.8 355.7 151.8 360.9 154.6 364.3 C157.4 367.7 151.7 372.6 156.3 374.6 C160.9 376.6 177.7 376.0 182.0 376.3" fill="none" stroke="#f0a883" stroke-width="1.3"/>
<path d="M103.2 398.6 C105.5 399.8 114.1 402.1 116.9 405.5 C119.8 408.9 119.5 413.4 120.3 419.2 C121.1 424.9 121.7 436.5 122.0 440.0" fill="none" stroke="#f0a883" stroke-width="1.3"/>
<path d="M125.5 414.0 C127.8 414.9 134.6 417.8 139.2 419.2 C143.8 420.6 146.7 422.0 153.0 422.6 C159.3 423.2 173.0 422.6 177.0 422.6" fill="none" stroke="#f0a883" stroke-width="1.3"/>
<path d="M142.6 427.8 L147.0 450.0" fill="none" stroke="#f0a883" stroke-width="1.3"/>
<path d="M159.8 450.0 L180.3 439.8" fill="none" stroke="#f0a883" stroke-width="1.3"/>
<path d="M74.0 330.0 C78.3 330.3 92.3 331.2 100.0 332.0 C107.7 332.8 116.7 334.5 120.0 335.0" fill="none" stroke="#f0a883" stroke-width="1.3"/>
<path d="M290.0 379.7 C293.7 382.0 307.4 389.2 312.3 393.5 C317.2 397.8 319.2 400.1 319.2 405.5 C319.2 410.9 315.2 419.7 312.3 426.0 C309.4 432.3 304.9 437.5 302.0 443.2 C299.1 448.9 296.2 457.2 295.0 460.0" fill="none" stroke="#f0a883" stroke-width="1.3"/>
<path d="M272.9 378.0 C275.5 377.4 284.0 374.6 288.3 374.6 C292.6 374.6 294.0 377.4 298.6 378.0 C303.2 378.6 310.7 378.3 315.8 378.0 C320.9 377.7 327.2 376.6 329.5 376.3" fill="none" stroke="#f0a883" stroke-width="1.3"/>
<path d="M250.0 300.0 C252.0 301.7 258.7 305.0 262.0 310.0 C265.3 315.0 266.5 323.3 270.0 330.0 C273.5 336.7 278.0 344.7 283.0 350.0 C288.0 355.3 297.2 360.0 300.0 362.0" fill="none" stroke="#f0a883" stroke-width="1.3"/>
<path d="M300.0 300.0 C303.3 300.8 312.5 305.0 320.0 305.0 C327.5 305.0 337.5 299.2 345.0 300.0 C352.5 300.8 361.7 308.3 365.0 310.0" fill="none" stroke="#f0a883" stroke-width="1.3"/>
<path d="M280.0 330.0 C283.3 330.8 291.7 333.3 300.0 335.0 C308.3 336.7 320.8 339.5 330.0 340.0 C339.2 340.5 346.7 337.2 355.0 338.0 C363.3 338.8 375.8 343.8 380.0 345.0" fill="none" stroke="#f0a883" stroke-width="1.3"/>
<path d="M230.0 350.0 C233.3 350.3 243.3 350.8 250.0 352.0 C256.7 353.2 261.7 355.7 270.0 357.0 C278.3 358.3 295.0 359.5 300.0 360.0" fill="none" stroke="#f0a883" stroke-width="1.3"/>
<path d="M320.0 345.0 C320.8 348.3 321.4 361.2 325.0 365.0 C328.6 368.8 338.8 367.2 341.5 367.7" fill="none" stroke="#f0a883" stroke-width="1.3"/>
<path d="M360.0 300.0 C360.8 305.0 363.3 320.0 365.0 330.0 C366.7 340.0 369.2 355.0 370.0 360.0" fill="none" stroke="#f0a883" stroke-width="1.3"/>
<path d="M385.0 300.0 C386.2 305.0 389.8 320.0 392.0 330.0 C394.2 340.0 395.8 350.8 398.0 360.0 C400.2 369.2 403.8 380.8 405.0 385.0" fill="none" stroke="#f0a883" stroke-width="1.3"/>
<path d="M400.0 300.0 C403.3 301.7 413.3 305.0 420.0 310.0 C426.7 315.0 435.0 323.3 440.0 330.0 C445.0 336.7 448.3 346.7 450.0 350.0" fill="none" stroke="#f0a883" stroke-width="1.3"/>
<path d="M360.0 395.0 C363.3 395.0 373.3 397.5 380.0 395.0 C386.7 392.5 396.7 382.5 400.0 380.0" fill="none" stroke="#f0a883" stroke-width="1.3"/>
<path d="M384.0 433.0 C386.3 433.8 393.7 438.3 398.0 438.0 C402.3 437.7 406.0 433.0 410.0 431.0 C414.0 429.0 417.7 427.7 422.0 426.0 C426.3 424.3 433.7 421.8 436.0 421.0" fill="none" stroke="#f0a883" stroke-width="1.3"/>
<path d="M430.0 384.0 C431.7 385.3 437.2 388.5 440.0 392.0 C442.8 395.5 445.7 401.8 447.0 405.0 C448.3 408.2 447.8 410.0 448.0 411.0" fill="none" stroke="#f0a883" stroke-width="1.3"/>
<path d="M260.0 400.0 C265.0 401.7 283.3 405.0 290.0 410.0 C296.7 415.0 298.3 426.7 300.0 430.0" fill="none" stroke="#f0a883" stroke-width="1.3"/>
<path d="M443.0 201.0 C447.0 199.6 460.8 194.8 467.0 192.6 C473.2 190.4 477.8 188.8 480.0 188.0" fill="none" stroke="#f0a883" stroke-width="1.3"/>
<path d="M443.0 216.6 L443.0 201.0" fill="none" stroke="#f0a883" stroke-width="1.3"/>
<path d="M391.5 268.0 L389.7 294.0" fill="none" stroke="#f0a883" stroke-width="1.3"/>
<path d="M432.6 226.9 C433.2 231.2 434.3 245.4 436.0 252.6 C437.7 259.8 441.0 262.9 443.0 269.8 C445.0 276.7 447.2 290.0 448.0 294.0" fill="none" stroke="#f0a883" stroke-width="1.3"/>
<path d="M410.0 184.0 C410.8 186.7 413.3 194.8 415.0 200.0 C416.7 205.2 419.2 212.5 420.0 215.0" fill="none" stroke="#f0a883" stroke-width="1.3"/>
<path d="M350.0 210.0 C352.5 210.8 360.0 212.5 365.0 215.0 C370.0 217.5 377.5 223.3 380.0 225.0" fill="none" stroke="#f0a883" stroke-width="1.3"/>
<path d="M440.0 270.0 C442.5 270.8 449.2 274.7 455.0 275.0 C460.8 275.3 471.7 272.5 475.0 272.0" fill="none" stroke="#f0a883" stroke-width="1.3"/>
<path d="M400.0 290.0 C403.3 291.7 413.3 297.5 420.0 300.0 C426.7 302.5 436.7 304.2 440.0 305.0" fill="none" stroke="#f0a883" stroke-width="1.3"/>
<path d="M300.0 250.0 C303.3 250.8 314.2 253.0 320.0 255.0 C325.8 257.0 332.5 260.8 335.0 262.0" fill="none" stroke="#f0a883" stroke-width="1.3"/>
<path d="M212.0 184.0 C210.5 186.2 206.5 192.7 202.8 197.0 C199.1 201.3 193.8 206.1 190.0 210.0 C186.2 213.9 182.3 216.2 180.2 220.2 C178.2 224.2 178.8 229.2 177.8 234.0 C176.7 238.8 175.3 242.1 174.0 249.0 C172.7 255.9 171.5 269.5 170.0 275.7 C168.5 281.9 167.0 281.7 165.0 286.0 C163.0 290.3 159.3 296.9 158.0 301.5 C156.7 306.1 156.3 309.2 157.2 313.5 C158.1 317.8 162.5 323.8 163.2 327.2 C163.9 330.6 160.9 330.9 161.5 334.0 C162.1 337.1 165.2 341.5 166.6 346.0 C168.0 350.5 167.7 357.0 170.0 360.9 C172.3 364.8 177.7 366.3 180.3 369.4 C182.9 372.5 184.9 375.1 185.5 379.7 C186.1 384.3 185.0 391.8 183.8 396.9 C182.7 402.0 179.8 406.9 178.6 410.6 C177.4 414.3 176.0 415.2 176.9 419.2 C177.8 423.2 181.0 431.2 183.8 434.6 C186.7 438.0 190.0 437.5 194.0 439.8 C198.0 442.1 203.8 446.6 207.8 448.3 C211.8 450.0 214.0 450.9 218.0 450.0 C222.0 449.1 227.5 445.2 231.8 443.2 C236.1 441.2 242.0 438.9 244.0 438.0" fill="none" stroke="#d8845b" stroke-width="2.6" stroke-linejoin="round" stroke-linecap="round"/>
<path d="M97.8 224.0 C99.2 225.0 104.4 228.2 106.5 230.2 C108.6 232.3 108.6 234.6 110.2 236.5 C111.9 238.4 115.0 239.0 116.5 241.5 C118.0 244.0 118.2 247.9 119.0 251.5 C119.8 255.1 119.0 260.3 121.2 262.9 C123.4 265.5 129.6 267.5 132.3 267.2 C135.0 266.9 135.2 261.2 137.5 261.2 C139.8 261.2 142.9 265.1 146.0 267.2 C149.1 269.3 152.7 272.0 156.3 274.0 C159.9 276.0 162.9 278.6 167.5 279.2 C172.1 279.8 177.7 277.4 183.8 277.4 C190.0 277.4 197.8 278.3 204.4 279.2 C211.0 280.1 216.6 281.5 223.2 282.6 C229.8 283.7 239.3 285.6 244.0 286.0 C248.7 286.4 246.3 284.5 251.5 285.2 C256.7 285.9 266.9 289.9 275.0 290.0 C283.1 290.1 292.4 287.6 300.0 286.0 C307.6 284.4 313.7 281.8 320.8 280.1 C327.9 278.4 335.8 276.1 342.7 275.7 C349.6 275.3 356.1 276.8 362.3 277.9 C368.5 278.9 377.1 281.3 380.0 282.0" fill="none" stroke="#d8845b" stroke-width="2.6" stroke-linejoin="round" stroke-linecap="round"/>
<path d="M241.2 184.0 C243.8 186.3 252.0 194.5 256.6 197.7 C261.2 200.8 265.2 200.9 268.6 202.9 C272.0 204.9 274.6 206.3 277.2 209.7 C279.8 213.1 282.0 218.6 284.0 223.5 C286.0 228.4 287.5 233.5 289.2 238.9 C290.9 244.3 292.3 250.3 294.3 256.0 C296.3 261.7 298.6 268.1 301.2 273.2 C303.8 278.3 307.2 283.4 309.8 286.9 C312.4 290.4 313.3 292.6 316.6 294.0 C319.9 295.4 324.9 293.0 329.6 295.4 C334.3 297.8 339.4 303.7 344.8 308.5 C350.2 313.3 356.4 318.8 362.3 324.0 C368.2 329.2 374.6 334.8 380.0 340.0 C385.4 345.2 390.0 349.2 395.0 355.0 C400.0 360.8 405.8 369.2 410.0 375.0 C414.2 380.8 418.3 387.5 420.0 390.0" fill="none" stroke="#d8845b" stroke-width="2.6" stroke-linejoin="round" stroke-linecap="round"/>
<path d="M398.3 184.0 C397.2 185.7 393.8 190.9 391.5 194.3 C389.2 197.7 386.0 200.6 384.6 204.6 C383.2 208.6 383.8 213.5 382.9 218.3 C382.0 223.2 382.1 230.0 379.5 233.7 C376.9 237.4 372.3 237.7 367.4 240.6 C362.5 243.5 354.9 248.3 350.3 250.9 C345.7 253.5 347.3 252.8 340.0 256.0 C332.7 259.1 311.9 267.5 306.3 269.8" fill="none" stroke="#d8845b" stroke-width="2.6" stroke-linejoin="round" stroke-linecap="round"/>
<path d="M379.5 233.7 C381.5 235.7 388.1 242.0 391.5 245.7 C394.9 249.4 397.1 251.7 400.0 256.0 C402.9 260.3 406.0 267.5 408.6 271.5 C411.2 275.5 411.9 276.6 415.5 280.0 C419.1 283.4 425.1 288.7 430.0 292.0 C434.9 295.3 442.5 298.7 445.0 300.0" fill="none" stroke="#d8845b" stroke-width="2.6" stroke-linejoin="round" stroke-linecap="round"/>
<path d="M398.3 249.2 C400.6 246.3 406.3 236.0 412.0 232.0 C417.7 228.0 427.4 227.8 432.6 225.2 C437.8 222.6 438.4 218.6 443.0 216.6 C447.6 214.6 456.0 214.3 460.0 213.2 C464.0 212.0 464.7 207.1 467.0 209.7 C469.3 212.3 472.1 223.4 473.8 228.6 C475.5 233.8 476.3 236.6 477.2 240.6 C478.1 244.6 479.2 248.0 479.0 252.6 C478.8 257.2 477.5 262.6 476.0 268.0 C474.5 273.4 471.0 282.2 470.0 285.0" fill="none" stroke="#d8845b" stroke-width="2.6" stroke-linejoin="round" stroke-linecap="round"/>
<path d="M340.0 259.5 C342.3 260.1 348.0 261.6 353.7 263.0 C359.4 264.4 368.0 266.3 374.3 268.0 C380.6 269.7 385.6 271.2 391.5 273.2 C397.4 275.2 406.9 278.9 410.0 280.0" fill="none" stroke="#d8845b" stroke-width="2.6" stroke-linejoin="round" stroke-linecap="round"/>
<path d="M342.4 288.6 C347.0 287.2 362.9 280.8 370.0 280.0 C377.1 279.2 382.5 283.3 385.0 284.0" fill="none" stroke="#d8845b" stroke-width="2.6" stroke-linejoin="round" stroke-linecap="round"/>
<path d="M246.6 293.2 C246.2 298.3 245.3 316.9 244.4 324.0 C243.5 331.1 242.2 331.6 241.0 335.8 C239.8 340.1 238.0 345.5 237.0 349.5 C236.0 353.5 234.7 357.9 235.2 360.0 C235.7 362.1 237.7 363.0 240.0 362.0 C242.3 361.0 247.4 355.3 248.9 354.0" fill="none" stroke="#d8845b" stroke-width="2.6" stroke-linejoin="round" stroke-linecap="round"/>
<path d="M248.9 354.0 C249.5 355.7 250.7 361.2 252.3 364.3 C253.9 367.4 257.5 369.8 258.3 372.9 C259.1 376.0 258.4 379.2 257.4 383.2 C256.4 387.2 255.2 392.6 252.3 396.9 C249.5 401.2 244.0 404.6 240.3 408.9 C236.6 413.2 232.7 417.4 230.0 422.6 C227.3 427.8 225.3 433.1 224.0 440.0 C222.7 446.9 222.3 460.0 222.0 464.0" fill="none" stroke="#d8845b" stroke-width="2.6" stroke-linejoin="round" stroke-linecap="round"/>
<path d="M257.4 383.2 C260.0 382.3 267.8 379.4 272.9 378.0 C278.0 376.6 284.0 374.6 288.3 374.6 C292.6 374.6 294.0 377.4 298.6 378.0 C303.2 378.6 310.7 378.3 315.8 378.0 C320.9 377.7 324.6 376.3 329.5 376.3 C334.4 376.3 339.9 378.0 345.0 378.0 C350.1 378.0 357.8 376.6 360.4 376.3" fill="none" stroke="#d8845b" stroke-width="2.6" stroke-linejoin="round" stroke-linecap="round"/>
<path d="M341.5 367.7 C340.9 372.6 339.7 389.8 338.0 396.9 C336.3 404.0 333.2 405.8 331.2 410.6 C329.2 415.5 327.4 421.7 326.0 426.0 C324.6 430.3 325.2 433.4 322.6 436.3 C320.0 439.2 313.7 441.5 310.6 443.2 C307.5 444.9 304.9 446.0 303.8 446.6" fill="none" stroke="#d8845b" stroke-width="2.6" stroke-linejoin="round" stroke-linecap="round"/>
<path d="M322.6 436.3 C324.3 438.0 328.3 446.0 332.9 446.6 C337.5 447.2 344.3 442.1 350.0 439.8 C355.7 437.5 361.5 434.1 367.2 433.0 C372.9 431.9 381.5 433.0 384.4 433.0" fill="none" stroke="#d8845b" stroke-width="2.6" stroke-linejoin="round" stroke-linecap="round"/>
<path d="M360.4 376.3 C362.1 378.9 368.1 386.8 370.7 391.7 C373.3 396.6 374.2 400.8 375.8 405.5 C377.4 410.2 378.6 413.4 380.0 420.0 C381.4 426.6 383.3 440.8 384.0 445.0" fill="none" stroke="#d8845b" stroke-width="2.6" stroke-linejoin="round" stroke-linecap="round"/>
<path d="M329.5 354.0 L341.5 367.7" fill="none" stroke="#d8845b" stroke-width="2.6" stroke-linejoin="round" stroke-linecap="round"/>
<rect x="111.0" y="243.7" width="11" height="8" rx="1" fill="#80bf2c" stroke="#b9dc7a" stroke-width="0.8"/>
<text x="116.5" y="250.5" text-anchor="middle" font-family="Liberation Sans" font-size="6.5" fill="#eefad8">A32</text>
<rect x="184.5" y="264" width="11" height="8" rx="1" fill="#80bf2c" stroke="#b9dc7a" stroke-width="0.8"/>
<rect x="240.0" y="293.5" width="11" height="8" rx="1" fill="#80bf2c" stroke="#b9dc7a" stroke-width="0.8"/>
<text x="245.5" y="300.3" text-anchor="middle" font-family="Liberation Sans" font-size="6.5" fill="#eefad8">M7</text>
<rect x="272.4" y="287.7" width="11" height="8" rx="1" fill="#80bf2c" stroke="#b9dc7a" stroke-width="0.8"/>
<text x="277.9" y="294.5" text-anchor="middle" font-family="Liberation Sans" font-size="6.5" fill="#eefad8">M4</text>
<rect x="280.2" y="321.9" width="11" height="8" rx="1" fill="#80bf2c" stroke="#b9dc7a" stroke-width="0.8"/>
<text x="285.7" y="328.7" text-anchor="middle" font-family="Liberation Sans" font-size="6.5" fill="#eefad8">A</text>
<rect x="370.0" y="292.6" width="11" height="8" rx="1" fill="#80bf2c" stroke="#b9dc7a" stroke-width="0.8"/>
<text x="375.5" y="299.40000000000003" text-anchor="middle" font-family="Liberation Sans" font-size="6.5" fill="#eefad8">A1</text>
<rect x="319.3" y="370.7" width="11" height="8" rx="1" fill="#80bf2c" stroke="#b9dc7a" stroke-width="0.8"/>
<rect x="374.5" y="403.2" width="11" height="8" rx="1" fill="#80bf2c" stroke="#b9dc7a" stroke-width="0.8"/>
<text x="380" y="410.0" text-anchor="middle" font-family="Liberation Sans" font-size="6.5" fill="#eefad8">A1</text>
<text x="268.3" y="197.7" font-family="Liberation Sans" font-weight="bold" font-size="7.8" fill="#2e2e2e" stroke="#f4f1e0" stroke-opacity="0.35" stroke-width="1.2" paint-order="stroke" letter-spacing="0.1">Box Hill</text>
<text x="193.8" y="230.1" font-family="Liberation Sans" font-weight="bold" font-size="7.8" fill="#2e2e2e" stroke="#f4f1e0" stroke-opacity="0.35" stroke-width="1.2" paint-order="stroke" letter-spacing="0.1">Llandilo</text>
<text x="118.2" y="207.6" font-family="Liberation Sans" font-weight="bold" font-size="7.8" fill="#2e2e2e" stroke="#f4f1e0" stroke-opacity="0.35" stroke-width="1.2" paint-order="stroke" letter-spacing="0.1">Windmallee</text>
<text x="436.9" y="242.3" font-family="Liberation Sans" font-weight="bold" font-size="7.8" fill="#2e2e2e" stroke="#f4f1e0" stroke-opacity="0.35" stroke-width="1.2" paint-order="stroke" letter-spacing="0.1">Belrose</text>
<text x="139.2" y="313.5" font-family="Liberation Sans" font-weight="bold" font-size="7.8" fill="#2e2e2e" stroke="#f4f1e0" stroke-opacity="0.35" stroke-width="1.2" paint-order="stroke" letter-spacing="0.1">Mulgoa</text>
<text x="102.8" y="328.9" font-family="Liberation Sans" font-weight="bold" font-size="7.8" fill="#2e2e2e" stroke="#f4f1e0" stroke-opacity="0.35" stroke-width="1.2" paint-order="stroke" letter-spacing="0.1">Wallacia</text>
<text x="161.5" y="339.5" font-family="Liberation Sans" font-weight="bold" font-size="7.8" fill="#2e2e2e" stroke="#f4f1e0" stroke-opacity="0.35" stroke-width="1.2" paint-order="stroke" letter-spacing="0.1">Luddenham</text>
<text x="182.4" y="374.6" font-family="Liberation Sans" font-weight="bold" font-size="7.8" fill="#2e2e2e" stroke="#f4f1e0" stroke-opacity="0.35" stroke-width="1.2" paint-order="stroke" letter-spacing="0.1">Bringelly</text>
<text x="99.7" y="398.9" font-family="Liberation Sans" font-weight="bold" font-size="7.8" fill="#2e2e2e" stroke="#f4f1e0" stroke-opacity="0.35" stroke-width="1.2" paint-order="stroke" letter-spacing="0.1">Werombi</text>
<text x="213.7" y="276.2" font-family="Liberation Sans" font-weight="bold" font-size="7.8" fill="#2e2e2e" stroke="#f4f1e0" stroke-opacity="0.35" stroke-width="1.2" paint-order="stroke" letter-spacing="0.1">Colyton</text>
<text x="282.5" y="363" font-family="Liberation Sans" font-weight="bold" font-size="7.8" fill="#2e2e2e" stroke="#f4f1e0" stroke-opacity="0.35" stroke-width="1.2" paint-order="stroke" letter-spacing="0.1">Liverpool</text>
<text x="340" y="331.2" font-family="Liberation Sans" font-weight="bold" font-size="7.8" fill="#2e2e2e" stroke="#f4f1e0" stroke-opacity="0.35" stroke-width="1.2" paint-order="stroke" letter-spacing="0.1">Berala</text>
<text x="385.5" y="317.1" font-family="Liberation Sans" font-weight="bold" font-size="7.8" fill="#2e2e2e" stroke="#f4f1e0" stroke-opacity="0.35" stroke-width="1.2" paint-order="stroke" letter-spacing="0.1">Chiswick</text>
<text x="433" y="331.8" font-family="Liberation Sans" font-weight="bold" font-size="7.8" fill="#2e2e2e" stroke="#f4f1e0" stroke-opacity="0.35" stroke-width="1.2" paint-order="stroke" letter-spacing="0.1">Sydney</text>
<text x="391.7" y="388.4" font-family="Liberation Sans" font-weight="bold" font-size="7.8" fill="#2e2e2e" stroke="#f4f1e0" stroke-opacity="0.35" stroke-width="1.2" paint-order="stroke" letter-spacing="0.1">Kogarah</text>
<text x="450" y="387.8" font-family="Liberation Sans" font-weight="bold" font-size="7.8" fill="#2e2e2e" stroke="#f4f1e0" stroke-opacity="0.35" stroke-width="1.2" paint-order="stroke" letter-spacing="0.1">Malabar</text>
<text x="358.6" y="432" font-family="Liberation Sans" font-weight="bold" font-size="7.8" fill="#2e2e2e" stroke="#f4f1e0" stroke-opacity="0.35" stroke-width="1.2" paint-order="stroke" letter-spacing="0.1">Kirrawee</text>
<circle cx="197.3" cy="268.2" r="6.9" fill="#6681e0" fill-opacity="0.74"/>
<circle cx="223.1" cy="253.7" r="6.9" fill="#6681e0" fill-opacity="0.74"/>
<circle cx="235.5" cy="253" r="6.9" fill="#6681e0" fill-opacity="0.74"/>
<circle cx="245.3" cy="248.1" r="6.9" fill="#6681e0" fill-opacity="0.74"/>
<circle cx="226.6" cy="265.2" r="6.9" fill="#6681e0" fill-opacity="0.74"/>
<circle cx="227.7" cy="276.2" r="6.9" fill="#6681e0" fill-opacity="0.74"/>
<circle cx="211.6" cy="283.9" r="6.9" fill="#6681e0" fill-opacity="0.74"/>
<circle cx="258.6" cy="254.8" r="6.9" fill="#6681e0" fill-opacity="0.74"/>
<circle cx="271.5" cy="241.8" r="6.9" fill="#6681e0" fill-opacity="0.74"/>
<circle cx="277.9" cy="252.6" r="6.9" fill="#6681e0" fill-opacity="0.74"/>
<circle cx="269.1" cy="262.8" r="6.9" fill="#6681e0" fill-opacity="0.74"/>
<circle cx="272" cy="272.6" r="6.9" fill="#6681e0" fill-opacity="0.74"/>
<circle cx="287.7" cy="272.6" r="6.9" fill="#6681e0" fill-opacity="0.74"/>
<circle cx="297.9" cy="261.4" r="6.9" fill="#6681e0" fill-opacity="0.74"/>
<circle cx="254.4" cy="282.5" r="6.9" fill="#6681e0" fill-opacity="0.74"/>
<circle cx="279.3" cy="283.2" r="6.9" fill="#6681e0" fill-opacity="0.74"/>
<circle cx="300" cy="295.8" r="6.9" fill="#6681e0" fill-opacity="0.74"/>
<circle cx="309" cy="243.9" r="6.9" fill="#6681e0" fill-opacity="0.74"/>
<circle cx="485.5" cy="196.7" r="6.9" fill="#6681e0" fill-opacity="0.74"/>
<circle cx="471.9" cy="211.3" r="6.9" fill="#6681e0" fill-opacity="0.74"/>
<circle cx="472.9" cy="224" r="6.9" fill="#6681e0" fill-opacity="0.74"/>
<circle cx="377.7" cy="218.2" r="6.9" fill="#6681e0" fill-opacity="0.74"/>
<circle cx="373.8" cy="225.6" r="6.9" fill="#6681e0" fill-opacity="0.74"/>
<circle cx="334.8" cy="228.5" r="6.9" fill="#6681e0" fill-opacity="0.74"/>
<circle cx="362.5" cy="244.9" r="6.9" fill="#6681e0" fill-opacity="0.74"/>
<circle cx="317.6" cy="263.1" r="6.9" fill="#6681e0" fill-opacity="0.74"/>
<circle cx="346.3" cy="262.5" r="6.9" fill="#6681e0" fill-opacity="0.74"/>
<circle cx="337.5" cy="268.4" r="6.9" fill="#6681e0" fill-opacity="0.74"/>
<circle cx="347.9" cy="273.4" r="6.9" fill="#6681e0" fill-opacity="0.74"/>
<circle cx="400.6" cy="260.8" r="6.9" fill="#6681e0" fill-opacity="0.74"/>
<circle cx="379.7" cy="275.8" r="6.9" fill="#6681e0" fill-opacity="0.74"/>
<circle cx="389.8" cy="278.3" r="6.9" fill="#6681e0" fill-opacity="0.74"/>
<circle cx="446.9" cy="258.8" r="6.9" fill="#6681e0" fill-opacity="0.74"/>
<circle cx="457.2" cy="258.8" r="6.9" fill="#6681e0" fill-opacity="0.74"/>
<circle cx="474.4" cy="258.2" r="6.9" fill="#6681e0" fill-opacity="0.74"/>
<circle cx="460.2" cy="268" r="6.9" fill="#6681e0" fill-opacity="0.74"/>
<circle cx="455.9" cy="285.6" r="6.9" fill="#6681e0" fill-opacity="0.74"/>
<circle cx="469.9" cy="285.6" r="6.9" fill="#6681e0" fill-opacity="0.74"/>
<circle cx="411.3" cy="277.8" r="6.9" fill="#6681e0" fill-opacity="0.74"/>
<circle cx="314.6" cy="284.6" r="6.9" fill="#6681e0" fill-opacity="0.74"/>
<circle cx="323.4" cy="280.7" r="6.9" fill="#6681e0" fill-opacity="0.74"/>
<circle cx="360.9" cy="282.6" r="6.9" fill="#6681e0" fill-opacity="0.74"/>
<circle cx="357.6" cy="292.4" r="6.9" fill="#6681e0" fill-opacity="0.74"/>
<circle cx="366.8" cy="293.4" r="6.9" fill="#6681e0" fill-opacity="0.74"/>
<circle cx="348.8" cy="296.3" r="6.9" fill="#6681e0" fill-opacity="0.74"/>
<circle cx="409" cy="295.3" r="6.9" fill="#6681e0" fill-opacity="0.74"/>
<circle cx="386.3" cy="307.3" r="6.9" fill="#6681e0" fill-opacity="0.74"/>
<circle cx="304.8" cy="309.3" r="6.9" fill="#6681e0" fill-opacity="0.74"/>
<circle cx="315" cy="310.3" r="6.9" fill="#6681e0" fill-opacity="0.74"/>
<circle cx="319.9" cy="318.7" r="6.9" fill="#6681e0" fill-opacity="0.74"/>
<circle cx="291.6" cy="320" r="6.9" fill="#6681e0" fill-opacity="0.74"/>
<circle cx="297.8" cy="331.2" r="6.9" fill="#6681e0" fill-opacity="0.74"/>
<circle cx="313" cy="332.3" r="6.9" fill="#6681e0" fill-opacity="0.74"/>
<circle cx="353.7" cy="314.8" r="6.9" fill="#6681e0" fill-opacity="0.74"/>
<circle cx="344.3" cy="315.2" r="6.9" fill="#6681e0" fill-opacity="0.74"/>
<circle cx="338" cy="323.4" r="6.9" fill="#6681e0" fill-opacity="0.74"/>
<circle cx="368.7" cy="323.4" r="6.9" fill="#6681e0" fill-opacity="0.74"/>
<circle cx="282.8" cy="341.5" r="6.9" fill="#6681e0" fill-opacity="0.74"/>
<circle cx="304.8" cy="341.5" r="6.9" fill="#6681e0" fill-opacity="0.74"/>
<circle cx="374.6" cy="335.7" r="6.9" fill="#6681e0" fill-opacity="0.74"/>
<circle cx="387.3" cy="331.8" r="6.9" fill="#6681e0" fill-opacity="0.74"/>
<circle cx="368.1" cy="343.5" r="6.9" fill="#6681e0" fill-opacity="0.74"/>
<circle cx="384.3" cy="343.5" r="6.9" fill="#6681e0" fill-opacity="0.74"/>
<circle cx="355.6" cy="348" r="6.9" fill="#6681e0" fill-opacity="0.74"/>
<circle cx="247" cy="347.4" r="6.9" fill="#6681e0" fill-opacity="0.74"/>
<circle cx="263.8" cy="346.4" r="6.9" fill="#6681e0" fill-opacity="0.74"/>
<circle cx="251.5" cy="355.2" r="6.9" fill="#6681e0" fill-opacity="0.74"/>
<circle cx="318.9" cy="349.9" r="6.9" fill="#6681e0" fill-opacity="0.74"/>
<circle cx="290" cy="356.2" r="6.9" fill="#6681e0" fill-opacity="0.74"/>
<circle cx="242.3" cy="365.9" r="6.9" fill="#6681e0" fill-opacity="0.74"/>
<circle cx="267.1" cy="365.9" r="6.9" fill="#6681e0" fill-opacity="0.74"/>
<circle cx="274" cy="379.6" r="6.9" fill="#6681e0" fill-opacity="0.74"/>
<circle cx="297.8" cy="368.9" r="6.9" fill="#6681e0" fill-opacity="0.74"/>
<circle cx="345.7" cy="361.6" r="6.9" fill="#6681e0" fill-opacity="0.74"/>
<circle cx="361.9" cy="365" r="6.9" fill="#6681e0" fill-opacity="0.74"/>
<circle cx="355.6" cy="370.8" r="6.9" fill="#6681e0" fill-opacity="0.74"/>
<circle cx="374.6" cy="359.1" r="6.9" fill="#6681e0" fill-opacity="0.74"/>
<circle cx="385.3" cy="368.9" r="6.9" fill="#6681e0" fill-opacity="0.74"/>
<circle cx="330.6" cy="375.3" r="6.9" fill="#6681e0" fill-opacity="0.74"/>
<circle cx="321.3" cy="386.4" r="6.9" fill="#6681e0" fill-opacity="0.74"/>
<circle cx="349.2" cy="379.6" r="6.9" fill="#6681e0" fill-opacity="0.74"/>
<circle cx="382.4" cy="382.5" r="6.9" fill="#6681e0" fill-opacity="0.74"/>
<circle cx="361.9" cy="392.9" r="6.9" fill="#6681e0" fill-opacity="0.74"/>
<circle cx="375.5" cy="392.3" r="6.9" fill="#6681e0" fill-opacity="0.74"/>
<circle cx="427.9" cy="299.5" r="6.9" fill="#6681e0" fill-opacity="0.74"/>
<circle cx="447.4" cy="298.9" r="6.9" fill="#6681e0" fill-opacity="0.74"/>
<circle cx="438.6" cy="307.3" r="6.9" fill="#6681e0" fill-opacity="0.74"/>
<circle cx="427.5" cy="309.3" r="6.9" fill="#6681e0" fill-opacity="0.74"/>
<circle cx="431.2" cy="317.1" r="6.9" fill="#6681e0" fill-opacity="0.74"/>
<circle cx="405" cy="323.4" r="6.9" fill="#6681e0" fill-opacity="0.74"/>
<circle cx="414.2" cy="324" r="6.9" fill="#6681e0" fill-opacity="0.74"/>
<circle cx="429.8" cy="327.9" r="6.9" fill="#6681e0" fill-opacity="0.74"/>
<circle cx="409.3" cy="330.8" r="6.9" fill="#6681e0" fill-opacity="0.74"/>
<circle cx="408.9" cy="343.5" r="6.9" fill="#6681e0" fill-opacity="0.74"/>
<circle cx="396.6" cy="347.4" r="6.9" fill="#6681e0" fill-opacity="0.74"/>
<circle cx="435.7" cy="339.6" r="6.9" fill="#6681e0" fill-opacity="0.74"/>
<circle cx="451.3" cy="334.7" r="6.9" fill="#6681e0" fill-opacity="0.74"/>
<circle cx="463" cy="333.7" r="6.9" fill="#6681e0" fill-opacity="0.74"/>
<circle cx="406.4" cy="353.2" r="6.9" fill="#6681e0" fill-opacity="0.74"/>
<circle cx="425.3" cy="351.9" r="6.9" fill="#6681e0" fill-opacity="0.74"/>
<circle cx="413.2" cy="359.7" r="6.9" fill="#6681e0" fill-opacity="0.74"/>
<circle cx="407" cy="369.5" r="6.9" fill="#6681e0" fill-opacity="0.74"/>
<circle cx="422.6" cy="367.9" r="6.9" fill="#6681e0" fill-opacity="0.74"/>
<circle cx="442.9" cy="362" r="6.9" fill="#6681e0" fill-opacity="0.74"/>
<circle cx="454.6" cy="362" r="6.9" fill="#6681e0" fill-opacity="0.74"/>
<circle cx="394.6" cy="377.7" r="6.9" fill="#6681e0" fill-opacity="0.74"/>
<circle cx="388.8" cy="390.4" r="6.9" fill="#6681e0" fill-opacity="0.74"/>
<circle cx="401.9" cy="389.4" r="6.9" fill="#6681e0" fill-opacity="0.74"/>
<circle cx="264.2" cy="403.4" r="6.9" fill="#6681e0" fill-opacity="0.74"/>
<circle cx="251.5" cy="412.2" r="6.9" fill="#6681e0" fill-opacity="0.74"/>
<circle cx="246.3" cy="419.6" r="6.9" fill="#6681e0" fill-opacity="0.74"/>
<circle cx="242.3" cy="430.4" r="6.9" fill="#6681e0" fill-opacity="0.74"/>
<circle cx="230.6" cy="443.5" r="6.9" fill="#6681e0" fill-opacity="0.74"/>
<circle cx="240.4" cy="445.4" r="6.9" fill="#6681e0" fill-opacity="0.74"/>
<circle cx="226.1" cy="451.9" r="6.9" fill="#6681e0" fill-opacity="0.74"/>
<circle cx="326.7" cy="417.1" r="6.9" fill="#6681e0" fill-opacity="0.74"/>
<circle cx="358" cy="434.7" r="6.9" fill="#6681e0" fill-opacity="0.74"/>
<circle cx="382.4" cy="399.5" r="6.9" fill="#6681e0" fill-opacity="0.74"/>
<circle cx="374.6" cy="417.1" r="6.9" fill="#6681e0" fill-opacity="0.74"/>
<circle cx="376.5" cy="427.3" r="6.9" fill="#6681e0" fill-opacity="0.74"/>
<circle cx="384.3" cy="438.6" r="6.9" fill="#6681e0" fill-opacity="0.74"/>
<circle cx="328.7" cy="451.3" r="6.9" fill="#6681e0" fill-opacity="0.74"/>
<circle cx="391.9" cy="403.9" r="6.9" fill="#6681e0" fill-opacity="0.74"/>
<circle cx="385.9" cy="429.7" r="6.9" fill="#6681e0" fill-opacity="0.74"/>
<circle cx="400.5" cy="445" r="6.9" fill="#6681e0" fill-opacity="0.74"/>
<text x="197.3" y="272.0" text-anchor="middle" font-family="Liberation Sans" font-weight="bold" font-size="8.2" fill="#2b2d3a">3</text>
<text x="223.1" y="257.5" text-anchor="middle" font-family="Liberation Sans" font-weight="bold" font-size="8.2" fill="#2b2d3a">6</text>
<text x="235.5" y="256.8" text-anchor="middle" font-family="Liberation Sans" font-weight="bold" font-size="8.2" fill="#2b2d3a">4</text>
<text x="245.3" y="251.9" text-anchor="middle" font-family="Liberation Sans" font-weight="bold" font-size="8.2" fill="#2b2d3a">2</text>
<text x="226.6" y="269.0" text-anchor="middle" font-family="Liberation Sans" font-weight="bold" font-size="8.2" fill="#2b2d3a">9</text>
<text x="227.7" y="280.0" text-anchor="middle" font-family="Liberation Sans" font-weight="bold" font-size="8.2" fill="#2b2d3a">2</text>
<text x="211.6" y="287.7" text-anchor="middle" font-family="Liberation Sans" font-weight="bold" font-size="8.2" fill="#2b2d3a">2</text>
<text x="258.6" y="258.6" text-anchor="middle" font-family="Liberation Sans" font-weight="bold" font-size="8.2" fill="#2b2d3a">4</text>
<text x="271.5" y="245.60000000000002" text-anchor="middle" font-family="Liberation Sans" font-weight="bold" font-size="8.2" fill="#2b2d3a">2</text>
<text x="277.9" y="256.4" text-anchor="middle" font-family="Liberation Sans" font-weight="bold" font-size="8.2" fill="#2b2d3a">2</text>
<text x="269.1" y="266.6" text-anchor="middle" font-family="Liberation Sans" font-weight="bold" font-size="8.2" fill="#2b2d3a">5</text>
<text x="272" y="276.40000000000003" text-anchor="middle" font-family="Liberation Sans" font-weight="bold" font-size="8.2" fill="#2b2d3a">5</text>
<text x="287.7" y="276.40000000000003" text-anchor="middle" font-family="Liberation Sans" font-weight="bold" font-size="8.2" fill="#2b2d3a">5</text>
<text x="297.9" y="265.2" text-anchor="middle" font-family="Liberation Sans" font-weight="bold" font-size="8.2" fill="#2b2d3a">5</text>
<text x="254.4" y="286.3" text-anchor="middle" font-family="Liberation Sans" font-weight="bold" font-size="8.2" fill="#2b2d3a">2</text>
<text x="279.3" y="287.0" text-anchor="middle" font-family="Liberation Sans" font-weight="bold" font-size="8.2" fill="#2b2d3a">2</text>
<text x="300" y="299.6" text-anchor="middle" font-family="Liberation Sans" font-weight="bold" font-size="8.2" fill="#2b2d3a">7</text>
<text x="309" y="247.70000000000002" text-anchor="middle" font-family="Liberation Sans" font-weight="bold" font-size="8.2" fill="#2b2d3a">3</text>
<text x="485.5" y="200.5" text-anchor="middle" font-family="Liberation Sans" font-weight="bold" font-size="8.2" fill="#2b2d3a">2</text>
<text x="471.9" y="215.10000000000002" text-anchor="middle" font-family="Liberation Sans" font-weight="bold" font-size="8.2" fill="#2b2d3a">5</text>
<text x="472.9" y="227.8" text-anchor="middle" font-family="Liberation Sans" font-weight="bold" font-size="8.2" fill="#2b2d3a">4</text>
<text x="377.7" y="222.0" text-anchor="middle" font-family="Liberation Sans" font-weight="bold" font-size="8.2" fill="#2b2d3a">8</text>
<text x="373.8" y="229.4" text-anchor="middle" font-family="Liberation Sans" font-weight="bold" font-size="8.2" fill="#2b2d3a">6</text>
<text x="334.8" y="232.3" text-anchor="middle" font-family="Liberation Sans" font-weight="bold" font-size="8.2" fill="#2b2d3a">3</text>
<text x="362.5" y="248.70000000000002" text-anchor="middle" font-family="Liberation Sans" font-weight="bold" font-size="8.2" fill="#2b2d3a">4</text>
<text x="317.6" y="266.90000000000003" text-anchor="middle" font-family="Liberation Sans" font-weight="bold" font-size="8.2" fill="#2b2d3a">6</text>
<text x="346.3" y="266.3" text-anchor="middle" font-family="Liberation Sans" font-weight="bold" font-size="8.2" fill="#2b2d3a">2</text>
<text x="337.5" y="272.2" text-anchor="middle" font-family="Liberation Sans" font-weight="bold" font-size="8.2" fill="#2b2d3a">2</text>
<text x="347.9" y="277.2" text-anchor="middle" font-family="Liberation Sans" font-weight="bold" font-size="8.2" fill="#2b2d3a">5</text>
<text x="400.6" y="264.6" text-anchor="middle" font-family="Liberation Sans" font-weight="bold" font-size="8.2" fill="#2b2d3a">2</text>
<text x="379.7" y="279.6" text-anchor="middle" font-family="Liberation Sans" font-weight="bold" font-size="8.2" fill="#2b2d3a">5</text>
<text x="389.8" y="282.1" text-anchor="middle" font-family="Liberation Sans" font-weight="bold" font-size="8.2" fill="#2b2d3a">3</text>
<text x="446.9" y="262.6" text-anchor="middle" font-family="Liberation Sans" font-weight="bold" font-size="8.2" fill="#2b2d3a">2</text>
<text x="457.2" y="262.6" text-anchor="middle" font-family="Liberation Sans" font-weight="bold" font-size="8.2" fill="#2b2d3a">2</text>
<text x="474.4" y="262.0" text-anchor="middle" font-family="Liberation Sans" font-weight="bold" font-size="8.2" fill="#2b2d3a">6</text>
<text x="460.2" y="271.8" text-anchor="middle" font-family="Liberation Sans" font-weight="bold" font-size="8.2" fill="#2b2d3a">7</text>
<text x="455.9" y="289.40000000000003" text-anchor="middle" font-family="Liberation Sans" font-weight="bold" font-size="8.2" fill="#2b2d3a">3</text>
<text x="469.9" y="289.40000000000003" text-anchor="middle" font-family="Liberation Sans" font-weight="bold" font-size="8.2" fill="#2b2d3a">2</text>
<text x="411.3" y="281.6" text-anchor="middle" font-family="Liberation Sans" font-weight="bold" font-size="8.2" fill="#2b2d3a">5</text>
<text x="314.6" y="288.40000000000003" text-anchor="middle" font-family="Liberation Sans" font-weight="bold" font-size="8.2" fill="#2b2d3a">2</text>
<text x="323.4" y="284.5" text-anchor="middle" font-family="Liberation Sans" font-weight="bold" font-size="8.2" fill="#2b2d3a">5</text>
<text x="360.9" y="286.40000000000003" text-anchor="middle" font-family="Liberation Sans" font-weight="bold" font-size="8.2" fill="#2b2d3a">2</text>
<text x="357.6" y="296.2" text-anchor="middle" font-family="Liberation Sans" font-weight="bold" font-size="8.2" fill="#2b2d3a">4</text>
<text x="366.8" y="297.2" text-anchor="middle" font-family="Liberation Sans" font-weight="bold" font-size="8.2" fill="#2b2d3a">2</text>
<text x="348.8" y="300.1" text-anchor="middle" font-family="Liberation Sans" font-weight="bold" font-size="8.2" fill="#2b2d3a">2</text>
<text x="409" y="299.1" text-anchor="middle" font-family="Liberation Sans" font-weight="bold" font-size="8.2" fill="#2b2d3a">4</text>
<text x="386.3" y="311.1" text-anchor="middle" font-family="Liberation Sans" font-weight="bold" font-size="8.2" fill="#2b2d3a">4</text>
<text x="304.8" y="313.1" text-anchor="middle" font-family="Liberation Sans" font-weight="bold" font-size="8.2" fill="#2b2d3a">5</text>
<text x="315" y="314.1" text-anchor="middle" font-family="Liberation Sans" font-weight="bold" font-size="8.2" fill="#2b2d3a">8</text>
<text x="319.9" y="322.5" text-anchor="middle" font-family="Liberation Sans" font-weight="bold" font-size="8.2" fill="#2b2d3a">3</text>
<text x="291.6" y="323.8" text-anchor="middle" font-family="Liberation Sans" font-weight="bold" font-size="8.2" fill="#2b2d3a">5</text>
<text x="297.8" y="335.0" text-anchor="middle" font-family="Liberation Sans" font-weight="bold" font-size="8.2" fill="#2b2d3a">8</text>
<text x="313" y="336.1" text-anchor="middle" font-family="Liberation Sans" font-weight="bold" font-size="8.2" fill="#2b2d3a">5</text>
<text x="353.7" y="318.6" text-anchor="middle" font-family="Liberation Sans" font-weight="bold" font-size="8.2" fill="#2b2d3a">2</text>
<text x="344.3" y="319.0" text-anchor="middle" font-family="Liberation Sans" font-weight="bold" font-size="8.2" fill="#2b2d3a">2</text>
<text x="338" y="327.2" text-anchor="middle" font-family="Liberation Sans" font-weight="bold" font-size="8.2" fill="#2b2d3a">4</text>
<text x="368.7" y="327.2" text-anchor="middle" font-family="Liberation Sans" font-weight="bold" font-size="8.2" fill="#2b2d3a">4</text>
<text x="282.8" y="345.3" text-anchor="middle" font-family="Liberation Sans" font-weight="bold" font-size="8.2" fill="#2b2d3a">2</text>
<text x="304.8" y="345.3" text-anchor="middle" font-family="Liberation Sans" font-weight="bold" font-size="8.2" fill="#2b2d3a">3</text>
<text x="374.6" y="339.5" text-anchor="middle" font-family="Liberation Sans" font-weight="bold" font-size="8.2" fill="#2b2d3a">7</text>
<text x="387.3" y="335.6" text-anchor="middle" font-family="Liberation Sans" font-weight="bold" font-size="8.2" fill="#2b2d3a">9</text>
<text x="368.1" y="347.3" text-anchor="middle" font-family="Liberation Sans" font-weight="bold" font-size="8.2" fill="#2b2d3a">2</text>
<text x="384.3" y="347.3" text-anchor="middle" font-family="Liberation Sans" font-weight="bold" font-size="8.2" fill="#2b2d3a">7</text>
<text x="355.6" y="351.8" text-anchor="middle" font-family="Liberation Sans" font-weight="bold" font-size="8.2" fill="#2b2d3a">4</text>
<text x="247" y="351.2" text-anchor="middle" font-family="Liberation Sans" font-weight="bold" font-size="8.2" fill="#2b2d3a">2</text>
<text x="263.8" y="350.2" text-anchor="middle" font-family="Liberation Sans" font-weight="bold" font-size="8.2" fill="#2b2d3a">3</text>
<text x="251.5" y="359.0" text-anchor="middle" font-family="Liberation Sans" font-weight="bold" font-size="8.2" fill="#2b2d3a">2</text>
<text x="318.9" y="353.7" text-anchor="middle" font-family="Liberation Sans" font-weight="bold" font-size="8.2" fill="#2b2d3a">5</text>
<text x="290" y="360.0" text-anchor="middle" font-family="Liberation Sans" font-weight="bold" font-size="8.2" fill="#2b2d3a">2</text>
<text x="242.3" y="369.7" text-anchor="middle" font-family="Liberation Sans" font-weight="bold" font-size="8.2" fill="#2b2d3a">5</text>
<text x="267.1" y="369.7" text-anchor="middle" font-family="Liberation Sans" font-weight="bold" font-size="8.2" fill="#2b2d3a">4</text>
<text x="274" y="383.40000000000003" text-anchor="middle" font-family="Liberation Sans" font-weight="bold" font-size="8.2" fill="#2b2d3a">2</text>
<text x="297.8" y="372.7" text-anchor="middle" font-family="Liberation Sans" font-weight="bold" font-size="8.2" fill="#2b2d3a">3</text>
<text x="345.7" y="365.40000000000003" text-anchor="middle" font-family="Liberation Sans" font-weight="bold" font-size="8.2" fill="#2b2d3a">8</text>
<text x="361.9" y="368.8" text-anchor="middle" font-family="Liberation Sans" font-weight="bold" font-size="8.2" fill="#2b2d3a">5</text>
<text x="355.6" y="374.6" text-anchor="middle" font-family="Liberation Sans" font-weight="bold" font-size="8.2" fill="#2b2d3a">5</text>
<text x="374.6" y="362.90000000000003" text-anchor="middle" font-family="Liberation Sans" font-weight="bold" font-size="8.2" fill="#2b2d3a">5</text>
<text x="385.3" y="372.7" text-anchor="middle" font-family="Liberation Sans" font-weight="bold" font-size="8.2" fill="#2b2d3a">2</text>
<text x="330.6" y="379.1" text-anchor="middle" font-family="Liberation Sans" font-weight="bold" font-size="8.2" fill="#2b2d3a">3</text>
<text x="321.3" y="390.2" text-anchor="middle" font-family="Liberation Sans" font-weight="bold" font-size="8.2" fill="#2b2d3a">3</text>
<text x="349.2" y="383.40000000000003" text-anchor="middle" font-family="Liberation Sans" font-weight="bold" font-size="8.2" fill="#2b2d3a">4</text>
<text x="382.4" y="386.3" text-anchor="middle" font-family="Liberation Sans" font-weight="bold" font-size="8.2" fill="#2b2d3a">5</text>
<text x="361.9" y="396.7" text-anchor="middle" font-family="Liberation Sans" font-weight="bold" font-size="8.2" fill="#2b2d3a">2</text>
<text x="375.5" y="396.1" text-anchor="middle" font-family="Liberation Sans" font-weight="bold" font-size="8.2" fill="#2b2d3a">9</text>
<text x="427.9" y="303.3" text-anchor="middle" font-family="Liberation Sans" font-weight="bold" font-size="8.2" fill="#2b2d3a">5</text>
<text x="447.4" y="302.7" text-anchor="middle" font-family="Liberation Sans" font-weight="bold" font-size="8.2" fill="#2b2d3a">2</text>
<text x="438.6" y="311.1" text-anchor="middle" font-family="Liberation Sans" font-weight="bold" font-size="8.2" fill="#2b2d3a">2</text>
<text x="427.5" y="313.1" text-anchor="middle" font-family="Liberation Sans" font-weight="bold" font-size="8.2" fill="#2b2d3a">6</text>
<text x="431.2" y="320.90000000000003" text-anchor="middle" font-family="Liberation Sans" font-weight="bold" font-size="8.2" fill="#2b2d3a">3</text>
<text x="405" y="327.2" text-anchor="middle" font-family="Liberation Sans" font-weight="bold" font-size="8.2" fill="#2b2d3a">2</text>
<text x="414.2" y="327.8" text-anchor="middle" font-family="Liberation Sans" font-weight="bold" font-size="8.2" fill="#2b2d3a">2</text>
<text x="429.8" y="331.7" text-anchor="middle" font-family="Liberation Sans" font-weight="bold" font-size="8.2" fill="#2b2d3a">8</text>
<text x="409.3" y="334.6" text-anchor="middle" font-family="Liberation Sans" font-weight="bold" font-size="8.2" fill="#2b2d3a">5</text>
<text x="408.9" y="347.3" text-anchor="middle" font-family="Liberation Sans" font-weight="bold" font-size="8.2" fill="#2b2d3a">5</text>
<text x="396.6" y="351.2" text-anchor="middle" font-family="Liberation Sans" font-weight="bold" font-size="8.2" fill="#2b2d3a">4</text>
<text x="435.7" y="343.40000000000003" text-anchor="middle" font-family="Liberation Sans" font-weight="bold" font-size="8.2" fill="#2b2d3a">9</text>
<text x="451.3" y="338.5" text-anchor="middle" font-family="Liberation Sans" font-weight="bold" font-size="8.2" fill="#2b2d3a">2</text>
<text x="463" y="337.5" text-anchor="middle" font-family="Liberation Sans" font-weight="bold" font-size="8.2" fill="#2b2d3a">3</text>
<text x="406.4" y="357.0" text-anchor="middle" font-family="Liberation Sans" font-weight="bold" font-size="8.2" fill="#2b2d3a">5</text>
<text x="425.3" y="355.7" text-anchor="middle" font-family="Liberation Sans" font-weight="bold" font-size="8.2" fill="#2b2d3a">5</text>
<text x="413.2" y="363.5" text-anchor="middle" font-family="Liberation Sans" font-weight="bold" font-size="8.2" fill="#2b2d3a">2</text>
<text x="407" y="373.3" text-anchor="middle" font-family="Liberation Sans" font-weight="bold" font-size="8.2" fill="#2b2d3a">2</text>
<text x="422.6" y="371.7" text-anchor="middle" font-family="Liberation Sans" font-weight="bold" font-size="8.2" fill="#2b2d3a">3</text>
<text x="442.9" y="365.8" text-anchor="middle" font-family="Liberation Sans" font-weight="bold" font-size="8.2" fill="#2b2d3a">7</text>
<text x="454.6" y="365.8" text-anchor="middle" font-family="Liberation Sans" font-weight="bold" font-size="8.2" fill="#2b2d3a">3</text>
<text x="394.6" y="381.5" text-anchor="middle" font-family="Liberation Sans" font-weight="bold" font-size="8.2" fill="#2b2d3a">2</text>
<text x="388.8" y="394.2" text-anchor="middle" font-family="Liberation Sans" font-weight="bold" font-size="8.2" fill="#2b2d3a">9</text>
<text x="401.9" y="393.2" text-anchor="middle" font-family="Liberation Sans" font-weight="bold" font-size="8.2" fill="#2b2d3a">2</text>
<text x="264.2" y="407.2" text-anchor="middle" font-family="Liberation Sans" font-weight="bold" font-size="8.2" fill="#2b2d3a">2</text>
<text x="251.5" y="416.0" text-anchor="middle" font-family="Liberation Sans" font-weight="bold" font-size="8.2" fill="#2b2d3a">5</text>
<text x="246.3" y="423.40000000000003" text-anchor="middle" font-family="Liberation Sans" font-weight="bold" font-size="8.2" fill="#2b2d3a">3</text>
<text x="242.3" y="434.2" text-anchor="middle" font-family="Liberation Sans" font-weight="bold" font-size="8.2" fill="#2b2d3a">4</text>
<text x="230.6" y="447.3" text-anchor="middle" font-family="Liberation Sans" font-weight="bold" font-size="8.2" fill="#2b2d3a">2</text>
<text x="240.4" y="449.2" text-anchor="middle" font-family="Liberation Sans" font-weight="bold" font-size="8.2" fill="#2b2d3a">3</text>
<text x="226.1" y="455.7" text-anchor="middle" font-family="Liberation Sans" font-weight="bold" font-size="8.2" fill="#2b2d3a">5</text>
<text x="326.7" y="420.90000000000003" text-anchor="middle" font-family="Liberation Sans" font-weight="bold" font-size="8.2" fill="#2b2d3a">4</text>
<text x="358" y="438.5" text-anchor="middle" font-family="Liberation Sans" font-weight="bold" font-size="8.2" fill="#2b2d3a">5</text>
<text x="382.4" y="403.3" text-anchor="middle" font-family="Liberation Sans" font-weight="bold" font-size="8.2" fill="#2b2d3a">2</text>
<text x="374.6" y="420.90000000000003" text-anchor="middle" font-family="Liberation Sans" font-weight="bold" font-size="8.2" fill="#2b2d3a">2</text>
<text x="376.5" y="431.1" text-anchor="middle" font-family="Liberation Sans" font-weight="bold" font-size="8.2" fill="#2b2d3a">6</text>
<text x="384.3" y="442.40000000000003" text-anchor="middle" font-family="Liberation Sans" font-weight="bold" font-size="8.2" fill="#2b2d3a">3</text>
<text x="328.7" y="455.1" text-anchor="middle" font-family="Liberation Sans" font-weight="bold" font-size="8.2" fill="#2b2d3a">5</text>
<text x="391.9" y="407.7" text-anchor="middle" font-family="Liberation Sans" font-weight="bold" font-size="8.2" fill="#2b2d3a">3</text>
<text x="385.9" y="433.5" text-anchor="middle" font-family="Liberation Sans" font-weight="bold" font-size="8.2" fill="#2b2d3a">3</text>
<text x="400.5" y="448.8" text-anchor="middle" font-family="Liberation Sans" font-weight="bold" font-size="8.2" fill="#2b2d3a">6</text>
<circle cx="320.5" cy="242.6" r="10.8" fill="#f8bf43" fill-opacity="0.8"/>
<text x="320.5" y="246.6" text-anchor="middle" font-family="Liberation Sans" font-weight="bold" font-size="9" fill="#3a3428">11</text>
<circle cx="421.1" cy="283.6" r="10.5" fill="#f8bf43" fill-opacity="0.8"/>
<text x="421.1" y="287.6" text-anchor="middle" font-family="Liberation Sans" font-weight="bold" font-size="9" fill="#3a3428">11</text>
<circle cx="328.3" cy="292.4" r="10.5" fill="#f8bf43" fill-opacity="0.8"/>
<text x="328.3" y="296.4" text-anchor="middle" font-family="Liberation Sans" font-weight="bold" font-size="9" fill="#3a3428">11</text>
<circle cx="266.2" cy="320.4" r="10" fill="#f8bf43" fill-opacity="0.8"/>
<text x="266.2" y="324.4" text-anchor="middle" font-family="Liberation Sans" font-weight="bold" font-size="9" fill="#3a3428">10</text>
<circle cx="278.3" cy="369.8" r="10.3" fill="#f8bf43" fill-opacity="0.8"/>
<text x="278.3" y="373.8" text-anchor="middle" font-family="Liberation Sans" font-weight="bold" font-size="9" fill="#3a3428">13</text>
<circle cx="429.2" cy="334.7" r="10.3" fill="#f8bf43" fill-opacity="0.8"/>
<text x="429.2" y="338.7" text-anchor="middle" font-family="Liberation Sans" font-weight="bold" font-size="9" fill="#3a3428">27</text>
<circle cx="457.7" cy="346.4" r="10.3" fill="#f8bf43" fill-opacity="0.8"/>
<text x="457.7" y="350.4" text-anchor="middle" font-family="Liberation Sans" font-weight="bold" font-size="9" fill="#3a3428">14</text>
<circle cx="444.8" cy="376.1" r="10.3" fill="#f8bf43" fill-opacity="0.8"/>
<text x="444.8" y="380.1" text-anchor="middle" font-family="Liberation Sans" font-weight="bold" font-size="9" fill="#3a3428">15</text>
<rect x="125" y="452" width="458" height="12" fill="#d9d9d6" fill-opacity="0.85"/>
<text x="128" y="461" font-family="Liberation Sans" font-size="7.8" fill="#3c3c3c" textLength="451" lengthAdjust="spacingAndGlyphs">Copyright: Esri, HERE, Garmin, USGS, Intermap, INCREMENT P, NRCan, Esri Japan, METI, Esri China (Hong Kong), Esri Kore...</text>
<text x="508.3" y="449" font-family="Liberation Sans" font-size="9.2" fill="#4a4a4a" textLength="69" lengthAdjust="spacing">Scale = 1 : 433K</text>
<path d="M78.5 421.5 V430 H126 V421.5 M78.5 430 V439 M117.5 430 V439" fill="none" stroke="#111" stroke-width="1.5"/>
<text x="102" y="428.3" text-anchor="middle" font-family="Liberation Sans" font-size="8.5" fill="#4a4a4a">10 km</text>
<text x="97.5" y="437.5" text-anchor="middle" font-family="Liberation Sans" font-size="8.5" fill="#4a4a4a">5 mi</text>
<text x="78" y="445.3" font-family="Liberation Sans" font-weight="bold" font-size="5.6" fill="#fff" fill-opacity="0.92" letter-spacing="0.2">POWERED BY</text>
<circle cx="117" cy="443.2" r="1.6" fill="#fff"/>
<text x="76.5" y="461.5" font-family="Liberation Sans" font-weight="bold" font-size="23.5" fill="#fff" letter-spacing="-0.8">esri</text>
<defs><linearGradient id="bg3" x1="0" y1="0" x2="0" y2="1"><stop offset="0" stop-color="#fbfbfb"/><stop offset="1" stop-color="#ebebeb"/></linearGradient></defs>
<rect x="78" y="188.5" width="36" height="16.5" fill="url(#bg3)" stroke="#cfcfcf" stroke-width="0.8"/>
<path d="M95.5 189 V204.5" stroke="#d8d8d8" stroke-width="1"/>
<path d="M83 196.8 H90 M86 194 L83 196.8 L86 199.6" fill="none" stroke="#333" stroke-width="1.3"/>
<path d="M100 196.8 H107 M104 194 L107 196.8 L104 199.6" fill="none" stroke="#aaa" stroke-width="1"/>
<rect x="117" y="188.5" width="24" height="16.5" fill="url(#bg3)" stroke="#cfcfcf" stroke-width="0.8"/>
<circle cx="129.5" cy="195.5" r="3" fill="none" stroke="#333" stroke-width="1"/><path d="M127.3 197.7 L124.5 200.5" stroke="#333" stroke-width="1.3"/>
<rect x="78.5" y="208" width="18.5" height="26.5" fill="url(#bg3)" stroke="#cfcfcf" stroke-width="0.8"/>
<path d="M84 216.5 H91 M87.5 213 V220" stroke="#333" stroke-width="1.6"/><path d="M84 228 H91" stroke="#333" stroke-width="1.4"/>
<rect x="78.5" y="238.5" width="18.5" height="17.5" fill="url(#bg3)" stroke="#cfcfcf" stroke-width="0.8"/>
<path d="M83.5 243.5 H92.5 V249 M83.5 243.5 V251.5 H88.5" fill="none" stroke="#333" stroke-width="1" stroke-dasharray="2 1.2"/><path d="M89.5 248.5 L89.5 254.5 L91 253 L92.5 255 L93.5 254.5 L92.2 252.4 L94.2 252 Z" fill="#333"/>
<rect x="78.5" y="259" width="18.5" height="18.5" fill="#555"/>
<circle cx="87.8" cy="268.2" r="6" fill="none" stroke="#fff" stroke-width="1.1"/><path d="M87.8 266.5 V271.5" stroke="#fff" stroke-width="1.6"/><circle cx="87.8" cy="264.3" r="0.9" fill="#fff"/>
<rect x="78.5" y="281" width="18.5" height="18.5" fill="url(#bg3)" stroke="#cfcfcf" stroke-width="0.8"/>
<path d="M82.5 285 H84.5 M82.5 289 H84.5 M82.5 293 H84.5 M86 285 H93 M86 289 H93 M86 293 H93" stroke="#333" stroke-width="1.3"/>
<defs><linearGradient id="bg2" x1="0" y1="0" x2="0" y2="1"><stop offset="0" stop-color="#fdfdfd"/><stop offset="1" stop-color="#e8e8e8"/></linearGradient></defs>
<rect x="566" y="209" width="17.5" height="24" fill="url(#bg2)" stroke="#d8d8d8" stroke-width="0.6"/>
<path d="M569.8 220 L575 217 L580.2 220 L575 222.8 Z" fill="#666"/><path d="M569.8 221.8 L575 224.6 L580.2 221.8 M570.2 223.6 L575 226.2 L579.8 223.6" fill="none" stroke="#777" stroke-width="0.8"/>
</g>
<defs><linearGradient id="bg1" x1="0" y1="0" x2="0" y2="1"><stop offset="0" stop-color="#fbfbfb"/><stop offset="1" stop-color="#e9e9e9"/></linearGradient></defs>
<rect x="75.5" y="466.5" width="19.5" height="19" rx="1" fill="url(#bg1)" stroke="#d3d3d3" stroke-width="0.8"/>
<rect x="98.5" y="466.5" width="19.5" height="19" rx="1" fill="url(#bg1)" stroke="#d3d3d3" stroke-width="0.8"/>
<rect x="121.5" y="466.5" width="19.5" height="19" rx="1" fill="url(#bg1)" stroke="#d3d3d3" stroke-width="0.8"/>
<rect x="144.5" y="466.5" width="19.5" height="19" rx="1" fill="url(#bg1)" stroke="#d3d3d3" stroke-width="0.8"/>
<path d="M82.5 478.5 L86.5 474.5" stroke="#555" stroke-width="1.5"/><circle cx="87.3" cy="473.7" r="1.7" fill="#555"/><path d="M87.3 472.2 L88.8 472.2" stroke="#f4f4f4" stroke-width="1"/>
<path d="M104.5 471.5 H112.5 V477 H106.5 L104.5 479 Z" fill="#9a9a9a" stroke="#555" stroke-width="0.9"/>
<text x="130.5" y="479" text-anchor="middle" font-family="Liberation Sans" font-weight="bold" font-size="8.5" fill="#4a4a4a">?</text>
<path d="M152.2 473 A3.3 3.3 0 1 0 156.8 473" fill="none" stroke="#555" stroke-width="1.1"/><path d="M154.5 471.3 V475" stroke="#555" stroke-width="1.1"/>
<path d="M154 483.5 H160" stroke="#aaa" stroke-width="0.6" stroke-dasharray="1 1"/>
<g transform="translate(74.8 174.6) rotate(-45)" fill="#5a5a5a"><path d="M0 0 L4.6 -2.6 V2.6 Z"/><rect x="5.9" y="-2.6" width="9.6" height="5.2"/><rect x="17" y="-2.6" width="4.6" height="5.2" rx="0.6"/></g>
<path d="M100.3 159 H114.8 L109.6 166.2 V172.8 Q108.6 174.6 107.6 172.8 L105.6 166.2 Z" fill="#d9d9d9"/><path d="M111.6 168.2 L115.4 172 M115.4 168.2 L111.6 172" stroke="#d9d9d9" stroke-width="1.4"/>
<!--MAPEND-->
</svg>

<!-- PIE -->
<svg id="pie" style="left:0;top:0" width="1024" height="641">
<path d="M752.6 317.4 L752.60 220.60 A96.8 96.8 0 0 1 848.90 307.62 Z" fill="#74a9e1" stroke="#fff" stroke-width="1"/>
<path d="M752.6 317.4 L848.90 307.62 A96.8 96.8 0 0 1 849.40 317.40 Z" fill="#ef8c5a" stroke="#fff" stroke-width="1"/>
<path d="M752.6 317.4 L849.40 317.40 A96.8 96.8 0 0 1 688.59 390.01 Z" fill="#41b48d" stroke="#fff" stroke-width="1"/>
<path d="M752.6 317.4 L688.59 390.01 A96.8 96.8 0 0 1 667.13 362.84 Z" fill="#ef6b92" stroke="#fff" stroke-width="1"/>
<path d="M752.6 317.4 L667.13 362.84 A96.8 96.8 0 0 1 693.00 241.12 Z" fill="#a77dd8" stroke="#fff" stroke-width="1"/>
<path d="M752.6 317.4 L693.00 241.12 A96.8 96.8 0 0 1 752.60 220.60 Z" fill="#3ab3c3" stroke="#fff" stroke-width="1"/>
<rect x="871" y="279" width="6" height="6.2" fill="#74a9e1"/>
<text x="882" y="286" font-family="Liberation Sans" font-size="8.6" fill="#333">Burger</text>
<rect x="871" y="293" width="6" height="7" fill="#ef8c5a"/>
<text x="882" y="300" font-family="Liberation Sans" font-size="8.6" fill="#333">Cakes</text>
<rect x="871" y="307" width="6" height="7" fill="#41b48d"/>
<text x="882" y="314" font-family="Liberation Sans" font-size="8.6" fill="#333">Chicken</text>
<rect x="871" y="321" width="6" height="7" fill="#ef6b92"/>
<text x="882" y="328" font-family="Liberation Sans" font-size="8.6" fill="#333">Ice Cream</text>
<rect x="871" y="335" width="6" height="7" fill="#a77dd8"/>
<text x="882" y="342" font-family="Liberation Sans" font-size="8.6" fill="#333">Pizza</text>
<rect x="871" y="349" width="6" height="7" fill="#3ab3c3"/>
<text x="882" y="356" font-family="Liberation Sans" font-size="8.6" fill="#333">Salad</text>
</svg>

<!-- BAR -->
<svg id="bar" style="left:0;top:0" width="1024" height="641">
<path d="M111.5 510.5 H938" stroke="#d8d8d8" stroke-width="1" stroke-dasharray="1 2"/>
<path d="M111.5 555.5 H938" stroke="#d8d8d8" stroke-width="1" stroke-dasharray="1 2"/>
<text x="106" y="512.8" text-anchor="end" font-family="Liberation Sans" font-size="8.6" fill="#333">100,000</text>
<text x="106" y="556.8" text-anchor="end" font-family="Liberation Sans" font-size="8.6" fill="#333">50,000</text>
<text x="106" y="600.5" text-anchor="end" font-family="Liberation Sans" font-size="8.6" fill="#333">0</text>
<rect x="119.1" y="576.6" width="60" height="21.4" fill="#74a9e1"/>
<text x="149.2" y="609" text-anchor="middle" font-family="Liberation Sans" font-size="8.7" fill="#333">Burger House</text>
<rect x="194.2" y="593.8" width="60" height="4.2" fill="#74a9e1"/>
<text x="224.3" y="609" text-anchor="middle" font-family="Liberation Sans" font-size="8.7" fill="#333">Emma&#39;s Cakes</text>
<rect x="269.4" y="580.8" width="60" height="17.2" fill="#74a9e1"/>
<text x="299.4" y="609" text-anchor="middle" font-family="Liberation Sans" font-size="8.7" fill="#333">Joey&#39;s Diner</text>
<rect x="344.5" y="547.5" width="60" height="50.5" fill="#74a9e1"/>
<text x="374.5" y="609" text-anchor="middle" font-family="Liberation Sans" font-size="8.7" fill="#333">Kelly&#39;s Kitchen</text>
<rect x="419.6" y="553.1" width="60" height="44.9" fill="#74a9e1"/>
<text x="449.7" y="609" text-anchor="middle" font-family="Liberation Sans" font-size="8.7" fill="#333">Little Italy</text>
<rect x="494.7" y="583.1" width="60" height="14.9" fill="#74a9e1"/>
<text x="524.8" y="609" text-anchor="middle" font-family="Liberation Sans" font-size="8.7" fill="#333">Lorento</text>
<rect x="569.9" y="568.8" width="60" height="29.2" fill="#74a9e1"/>
<text x="599.9" y="609" text-anchor="middle" font-family="Liberation Sans" font-size="8.7" fill="#333">Molly Restaurants</text>
<rect x="645.0" y="580.3" width="60" height="17.7" fill="#74a9e1"/>
<text x="675.1" y="609" text-anchor="middle" font-family="Liberation Sans" font-size="8.7" fill="#333">Myles Ices</text>
<rect x="720.1" y="588.8" width="60" height="9.2" fill="#74a9e1"/>
<text x="750.2" y="609" text-anchor="middle" font-family="Liberation Sans" font-size="8.7" fill="#333">Oscars</text>
<rect x="795.2" y="565.3" width="60" height="32.7" fill="#74a9e1"/>
<text x="825.3" y="609" text-anchor="middle" font-family="Liberation Sans" font-size="8.7" fill="#333">Salad World</text>
<rect x="870.4" y="532.1" width="60" height="65.9" fill="#74a9e1"/>
<text x="900.4" y="609" text-anchor="middle" font-family="Liberation Sans" font-size="8.7" fill="#333">Theodores</text>
<path d="M111.6 598.5 V602" stroke="#d0d0d0" stroke-width="1"/>
<path d="M186.7 598.5 V602" stroke="#d0d0d0" stroke-width="1"/>
<path d="M261.9 598.5 V602" stroke="#d0d0d0" stroke-width="1"/>
<path d="M337.0 598.5 V602" stroke="#d0d0d0" stroke-width="1"/>
<path d="M412.1 598.5 V602" stroke="#d0d0d0" stroke-width="1"/>
<path d="M487.2 598.5 V602" stroke="#d0d0d0" stroke-width="1"/>
<path d="M562.4 598.5 V602" stroke="#d0d0d0" stroke-width="1"/>
<path d="M637.5 598.5 V602" stroke="#d0d0d0" stroke-width="1"/>
<path d="M712.6 598.5 V602" stroke="#d0d0d0" stroke-width="1"/>
<path d="M787.7 598.5 V602" stroke="#d0d0d0" stroke-width="1"/>
<path d="M862.9 598.5 V602" stroke="#d0d0d0" stroke-width="1"/>
<path d="M938.0 598.5 V602" stroke="#d0d0d0" stroke-width="1"/>
<path d="M111.5 598.5 H938" stroke="#d0d0d0" stroke-width="1"/>
</svg>
</body></html>
